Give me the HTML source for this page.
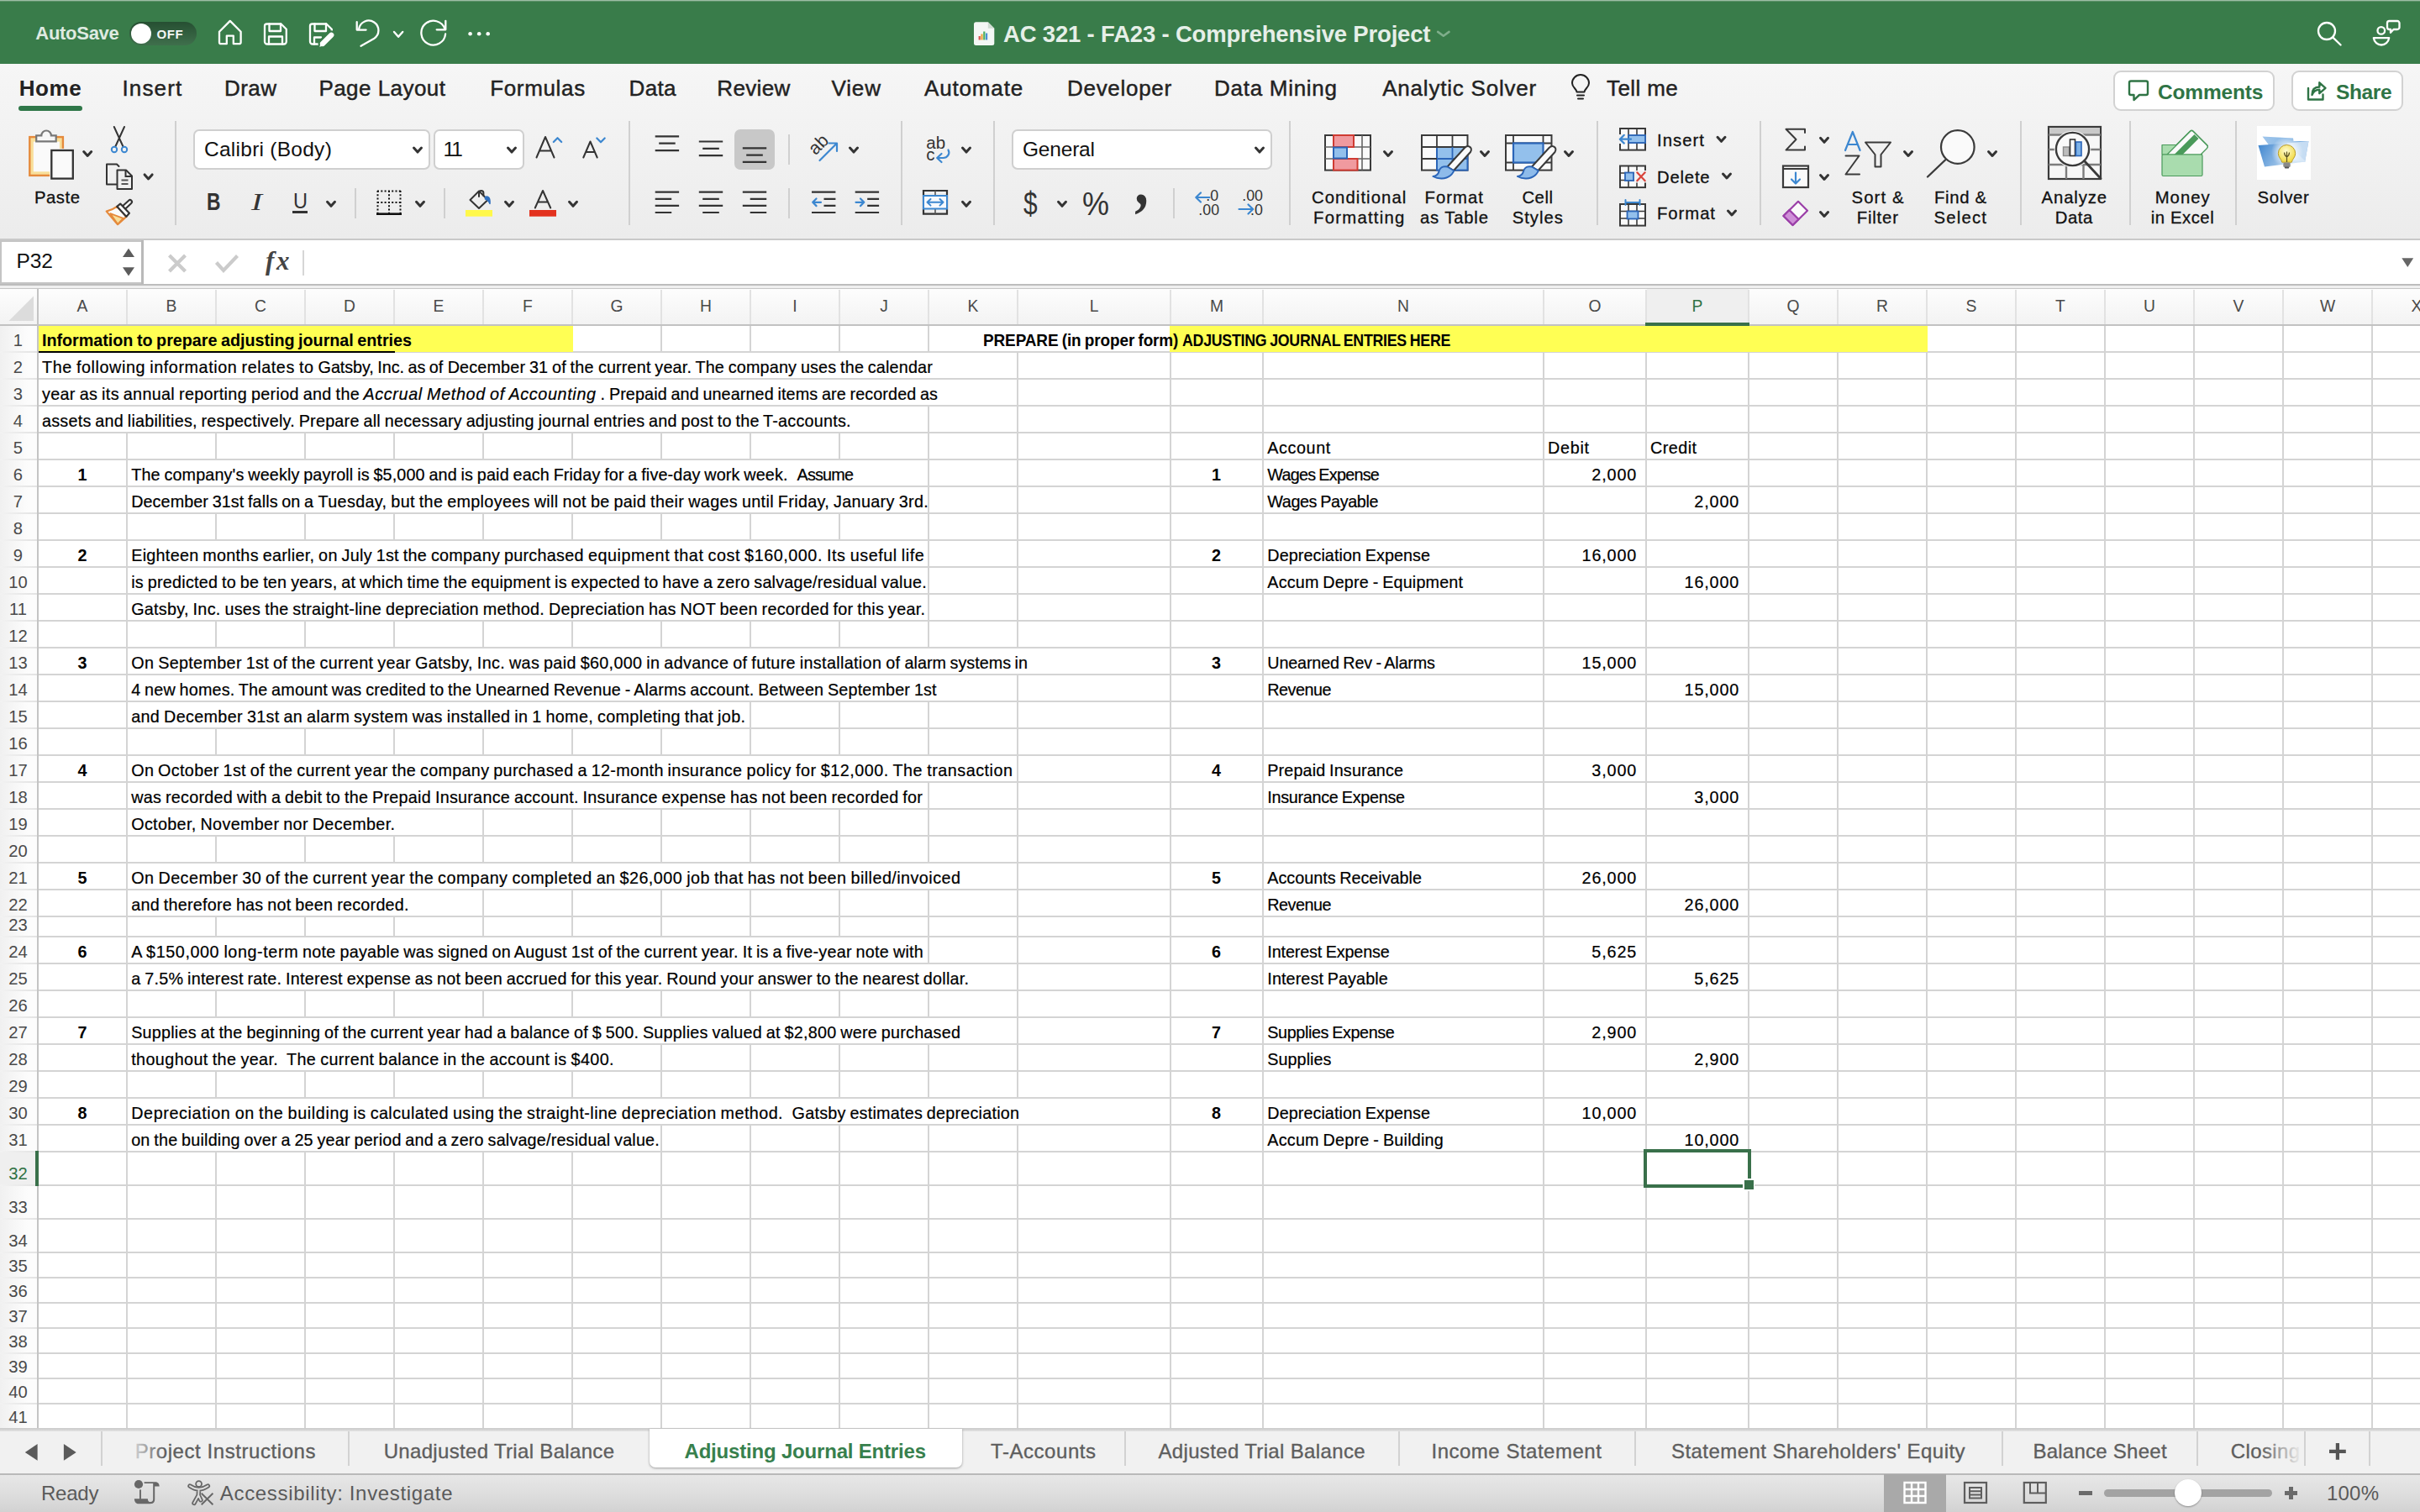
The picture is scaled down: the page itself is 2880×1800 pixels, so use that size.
<!DOCTYPE html>
<html><head><meta charset="utf-8"><title>AC 321 - FA23 - Comprehensive Project</title>
<style>
html,body{margin:0;padding:0;width:2880px;height:1800px;overflow:hidden;}
#app{position:relative;width:2880px;height:1800px;overflow:hidden;background:#fff;}
body{width:2880px;height:1800px;overflow:hidden;background:#fff;font-family:"Liberation Sans", sans-serif;position:relative;}
.t{position:absolute;white-space:pre;}
.r{position:absolute;}
svg{position:absolute;left:0;top:0;overflow:visible;}
</style></head><body><div id="app">
<div class="r" style="left:0px;top:0px;width:2880px;height:76px;background:#397c4a;"></div>
<div class="r" style="left:0px;top:0px;width:2880px;height:1px;background:#9dbea6;"></div>
<div class="r" style="left:0px;top:1px;width:2880px;height:1px;background:#5c9169;"></div>
<div class="t" style="top:25.48px;font-size:22px;line-height:29px;color:#dfeae1;font-weight:700;letter-spacing:-0.283px;left:42.30px;">AutoSave</div>
<div class="t" style="top:23.07px;font-size:27.5px;line-height:36px;color:#e6efe8;font-weight:700;letter-spacing:-0.182px;left:1194.00px;">AC 321 - FA23 - Comprehensive Project</div>
<div class="r" style="left:0px;top:76px;width:2880px;height:208px;background:linear-gradient(#f6f6f6,#f3f3f3 30%,#ececec);"></div>
<div class="r" style="left:0px;top:284px;width:2880px;height:2px;background:#c9c9c9;"></div>
<div class="t" style="top:87.69px;font-size:26px;line-height:34px;color:#222;font-weight:700;letter-spacing:0.550px;left:22.80px;">Home</div>
<div class="t" style="top:87.69px;font-size:26px;line-height:34px;color:#222;letter-spacing:1.134px;-webkit-text-stroke:0.45px #222;left:145.50px;">Insert</div>
<div class="t" style="top:87.69px;font-size:26px;line-height:34px;color:#222;letter-spacing:0.443px;-webkit-text-stroke:0.45px #222;left:267.00px;">Draw</div>
<div class="t" style="top:87.69px;font-size:26px;line-height:34px;color:#222;letter-spacing:0.458px;-webkit-text-stroke:0.45px #222;left:379.40px;">Page Layout</div>
<div class="t" style="top:87.69px;font-size:26px;line-height:34px;color:#222;letter-spacing:0.663px;-webkit-text-stroke:0.45px #222;left:583.20px;">Formulas</div>
<div class="t" style="top:87.69px;font-size:26px;line-height:34px;color:#222;letter-spacing:0.326px;-webkit-text-stroke:0.45px #222;left:748.60px;">Data</div>
<div class="t" style="top:87.69px;font-size:26px;line-height:34px;color:#222;letter-spacing:0.330px;-webkit-text-stroke:0.45px #222;left:853.30px;">Review</div>
<div class="t" style="top:87.69px;font-size:26px;line-height:34px;color:#222;letter-spacing:0.903px;-webkit-text-stroke:0.45px #222;left:989.40px;">View</div>
<div class="t" style="top:87.69px;font-size:26px;line-height:34px;color:#222;letter-spacing:0.843px;-webkit-text-stroke:0.45px #222;left:1100.00px;">Automate</div>
<div class="t" style="top:87.69px;font-size:26px;line-height:34px;color:#222;letter-spacing:0.711px;-webkit-text-stroke:0.45px #222;left:1270.00px;">Developer</div>
<div class="t" style="top:87.69px;font-size:26px;line-height:34px;color:#222;letter-spacing:0.727px;-webkit-text-stroke:0.45px #222;left:1445.00px;">Data Mining</div>
<div class="t" style="top:87.69px;font-size:26px;line-height:34px;color:#222;letter-spacing:0.795px;-webkit-text-stroke:0.45px #222;left:1645.20px;">Analytic Solver</div>
<div class="t" style="top:87.69px;font-size:26px;line-height:34px;color:#222;letter-spacing:0.407px;-webkit-text-stroke:0.45px #222;left:1912.00px;">Tell me</div>
<div class="r" style="left:22px;top:126px;width:76px;height:6px;background:#2f7748;border-radius:3px;"></div>
<div class="r" style="left:2515px;top:84px;width:192px;height:48px;background:#fff;border:2px solid #d2d2d2;border-radius:9px;box-sizing:border-box;"></div>
<div class="r" style="left:2727px;top:84px;width:133px;height:48px;background:#fff;border:2px solid #d2d2d2;border-radius:9px;box-sizing:border-box;"></div>
<div class="t" style="top:93.51px;font-size:24.5px;line-height:32px;color:#2f7445;font-weight:700;letter-spacing:-0.187px;left:2568.00px;">Comments</div>
<div class="t" style="top:93.51px;font-size:24.5px;line-height:32px;color:#2f7445;font-weight:700;letter-spacing:-0.398px;left:2780.00px;">Share</div>
<div class="r" style="left:230px;top:154px;width:282px;height:48px;background:#fff;border:2px solid #cfcfcf;border-radius:7px;box-sizing:border-box;"></div>
<div class="r" style="left:516px;top:154px;width:108px;height:48px;background:#fff;border:2px solid #cfcfcf;border-radius:7px;box-sizing:border-box;"></div>
<div class="r" style="left:1204px;top:154px;width:310px;height:48px;background:#fff;border:2px solid #cfcfcf;border-radius:7px;box-sizing:border-box;"></div>
<div class="r" style="left:874px;top:154px;width:48px;height:48px;background:#c8c8c8;border-radius:7px;"></div>
<div class="t" style="top:162.11px;font-size:24.5px;line-height:32px;color:#111;letter-spacing:0.261px;left:243.00px;">Calibri (Body)</div>
<div class="t" style="top:162.11px;font-size:24.5px;line-height:32px;color:#111;letter-spacing:-1.938px;left:527.50px;">11</div>
<div class="t" style="top:162.11px;font-size:24.5px;line-height:32px;color:#111;letter-spacing:-0.195px;left:1217.00px;">General</div>
<div class="r" style="left:208px;top:144px;width:2px;height:124px;background:#d0d0d0;"></div>
<div class="r" style="left:748px;top:144px;width:2px;height:124px;background:#d0d0d0;"></div>
<div class="r" style="left:1072px;top:144px;width:2px;height:124px;background:#d0d0d0;"></div>
<div class="r" style="left:1182px;top:144px;width:2px;height:124px;background:#d0d0d0;"></div>
<div class="r" style="left:1534px;top:144px;width:2px;height:124px;background:#d0d0d0;"></div>
<div class="r" style="left:1900px;top:144px;width:2px;height:124px;background:#d0d0d0;"></div>
<div class="r" style="left:2094px;top:144px;width:2px;height:124px;background:#d0d0d0;"></div>
<div class="r" style="left:2404px;top:144px;width:2px;height:124px;background:#d0d0d0;"></div>
<div class="r" style="left:2534px;top:144px;width:2px;height:124px;background:#d0d0d0;"></div>
<div class="r" style="left:2660px;top:144px;width:2px;height:124px;background:#d0d0d0;"></div>
<div class="r" style="left:422px;top:224px;width:2px;height:36px;background:#d0d0d0;"></div>
<div class="r" style="left:528px;top:224px;width:2px;height:36px;background:#d0d0d0;"></div>
<div class="r" style="left:938px;top:160px;width:2px;height:36px;background:#d0d0d0;"></div>
<div class="r" style="left:938px;top:224px;width:2px;height:36px;background:#d0d0d0;"></div>
<div class="r" style="left:1396px;top:224px;width:2px;height:36px;background:#d0d0d0;"></div>
<div class="t" style="top:221.67px;font-size:20.3px;line-height:26px;color:#111;letter-spacing:0.531px;-webkit-text-stroke:0.3px #111;left:41.00px;">Paste</div>
<div class="t" style="top:221.67px;font-size:20.3px;line-height:26px;color:#111;letter-spacing:1.082px;-webkit-text-stroke:0.3px #111;left:1561.00px;">Conditional</div>
<div class="t" style="top:245.67px;font-size:20.3px;line-height:26px;color:#111;letter-spacing:1.274px;-webkit-text-stroke:0.3px #111;left:1563.00px;">Formatting</div>
<div class="t" style="top:221.67px;font-size:20.3px;line-height:26px;color:#111;letter-spacing:1.033px;-webkit-text-stroke:0.3px #111;left:1695.60px;">Format</div>
<div class="t" style="top:245.67px;font-size:20.3px;line-height:26px;color:#111;letter-spacing:0.830px;-webkit-text-stroke:0.3px #111;left:1690.00px;">as Table</div>
<div class="t" style="top:221.67px;font-size:20.3px;line-height:26px;color:#111;letter-spacing:0.549px;-webkit-text-stroke:0.3px #111;left:1811.40px;">Cell</div>
<div class="t" style="top:245.67px;font-size:20.3px;line-height:26px;color:#111;letter-spacing:0.953px;-webkit-text-stroke:0.3px #111;left:1799.80px;">Styles</div>
<div class="t" style="top:153.97px;font-size:20.3px;line-height:26px;color:#111;letter-spacing:1.053px;-webkit-text-stroke:0.3px #111;left:1972.00px;">Insert</div>
<div class="t" style="top:197.57px;font-size:20.3px;line-height:26px;color:#111;letter-spacing:0.792px;-webkit-text-stroke:0.3px #111;left:1972.00px;">Delete</div>
<div class="t" style="top:241.47px;font-size:20.3px;line-height:26px;color:#111;letter-spacing:0.953px;-webkit-text-stroke:0.3px #111;left:1972.00px;">Format</div>
<div class="t" style="top:221.67px;font-size:20.3px;line-height:26px;color:#111;letter-spacing:1.128px;-webkit-text-stroke:0.3px #111;left:2203.50px;">Sort &amp;</div>
<div class="t" style="top:245.67px;font-size:20.3px;line-height:26px;color:#111;letter-spacing:0.844px;-webkit-text-stroke:0.3px #111;left:2209.70px;">Filter</div>
<div class="t" style="top:221.67px;font-size:20.3px;line-height:26px;color:#111;letter-spacing:0.675px;-webkit-text-stroke:0.3px #111;left:2302.00px;">Find &amp;</div>
<div class="t" style="top:245.67px;font-size:20.3px;line-height:26px;color:#111;letter-spacing:1.245px;-webkit-text-stroke:0.3px #111;left:2301.40px;">Select</div>
<div class="t" style="top:221.67px;font-size:20.3px;line-height:26px;color:#111;letter-spacing:0.874px;-webkit-text-stroke:0.3px #111;left:2429.60px;">Analyze</div>
<div class="t" style="top:245.67px;font-size:20.3px;line-height:26px;color:#111;letter-spacing:0.585px;-webkit-text-stroke:0.3px #111;left:2445.70px;">Data</div>
<div class="t" style="top:221.67px;font-size:20.3px;line-height:26px;color:#111;letter-spacing:1.031px;-webkit-text-stroke:0.3px #111;left:2564.70px;">Money</div>
<div class="t" style="top:245.67px;font-size:20.3px;line-height:26px;color:#111;letter-spacing:0.555px;-webkit-text-stroke:0.3px #111;left:2559.80px;">in Excel</div>
<div class="t" style="top:221.87px;font-size:20.3px;line-height:26px;color:#111;letter-spacing:0.740px;-webkit-text-stroke:0.3px #111;left:2686.60px;">Solver</div>
<div class="t" style="top:220.00px;font-size:30px;line-height:39px;color:#333;font-weight:700;transform:scaleX(0.761);transform-origin:0 0;left:246.00px;">B</div>
<div class="t" style="top:220.98px;font-size:29.5px;line-height:38px;color:#333;font-style:italic;font-family:'Liberation Serif', serif;transform:scaleX(1.323);transform-origin:0 0;left:298.80px;">I</div>
<div class="t" style="top:223.34px;font-size:25px;line-height:32px;color:#333;transform:scaleX(0.941);transform-origin:0 0;left:348.50px;">U</div>
<div class="r" style="left:348px;top:251.3px;width:18px;height:2.4px;background:#333;"></div>
<div class="t" style="top:216.79px;font-size:39px;line-height:51px;color:#333;transform:scaleX(0.765);transform-origin:0 0;left:1218.40px;">$</div>
<div class="t" style="top:216.81px;font-size:39.5px;line-height:51px;color:#333;transform:scaleX(0.911);transform-origin:0 0;left:1287.60px;">%</div>
<div class="t" style="top:205.77px;font-size:78px;line-height:101px;color:#333;font-weight:700;font-family:'Liberation Serif', serif;transform:scaleX(0.847);transform-origin:0 0;left:1346.50px;">’</div>
<div class="r" style="left:0px;top:286px;width:2880px;height:52px;background:#fff;"></div>
<div class="r" style="left:0px;top:286px;width:170px;height:2px;background:#c4c4c4;"></div>
<div class="r" style="left:0px;top:336px;width:170px;height:2px;background:#c4c4c4;"></div>
<div class="r" style="left:0px;top:286px;width:2px;height:52px;background:#c4c4c4;"></div>
<div class="r" style="left:168px;top:286px;width:3px;height:52px;background:#b9b9b9;"></div>
<div class="r" style="left:360px;top:298px;width:2px;height:30px;background:#d6d6d6;"></div>
<div class="t" style="top:294.91px;font-size:24.5px;line-height:32px;color:#111;letter-spacing:-0.197px;left:19.60px;">P32</div>
<div class="t" style="top:290.76px;font-size:31px;line-height:40px;color:#444;font-weight:700;font-style:italic;font-family:'Liberation Serif', serif;letter-spacing:2.672px;left:316.00px;">fx</div>
<svg width="2880" height="344" viewBox="0 0 2880 344" fill="none"><defs><linearGradient id="tg" x1="0" y1="0" x2="0" y2="1"><stop offset="0" stop-color="#264f32"/><stop offset="1" stop-color="#3f6f4c"/></linearGradient></defs><rect x="154" y="26" width="80" height="28" rx="14" fill="url(#tg)"/><circle cx="168" cy="40" r="12" fill="#fff"/><path d="M261 37.8L273.800 24.900L286.600 37.800V50.200a2 2 0 0 1-2 2H277.800V42.600H269.800V52.200H263a2 2 0 0 1-2-2Z" stroke="#fff" stroke-width="2.3" stroke-linecap="round" stroke-linejoin="round" fill="none"/><path d="M317.5 28.5H334.5L340.8 34.8V49.5a3 3 0 0 1-3 3H318a3 3 0 0 1-3-3V31a2.5 2.5 0 0 1 2.5-2.5Z" stroke="#fff" stroke-width="2.3" stroke-linecap="round" stroke-linejoin="round" fill="none"/><path d="M320.5 28.5V37H334V28.5M320 52.5V43.5H336V52.5" stroke="#fff" stroke-width="2.3" stroke-linecap="round" stroke-linejoin="round" fill="none"/><path d="M381 52.5H372a3 3 0 0 1-3-3V31a2.5 2.5 0 0 1 2.500-2.5H388.500L394.800 34.800V37.500" stroke="#fff" stroke-width="2.3" stroke-linecap="round" stroke-linejoin="round" fill="none"/><path d="M374.5 28.5V37H388V28.5M374 52.5V44.5H382" stroke="#fff" stroke-width="2.3" stroke-linecap="round" stroke-linejoin="round" fill="none"/><path d="M384 52L394.300 41.700" stroke="#397c4a" stroke-width="11" stroke-linecap="round"/><path d="M384 52L394.300 41.700" stroke="#fff" stroke-width="6.200" stroke-linecap="round"/><path d="M380.300 55.800L381.800 50.500L385.800 54.300Z" fill="#fff"/><path d="M424.700 26.200V35.600H435.600" stroke="#fff" stroke-width="2.3" stroke-linecap="round" stroke-linejoin="round" fill="none"/><path d="M427.200 34.200A11.700 11.700 0 1 1 445 46.100L429.500 54.800" stroke="#fff" stroke-width="2.3" stroke-linecap="round" stroke-linejoin="round" fill="none"/><path d="M469.00 38.00L474.10 43.80L479.20 38.00" fill="none" stroke="#fff" stroke-width="2.4" stroke-linecap="round" stroke-linejoin="round"/><path d="M530.300 24.800V35.300H519.700" stroke="#fff" stroke-width="2.3" stroke-linecap="round" stroke-linejoin="round" fill="none"/><path d="M529.400 34.500A14.400 14.400 0 1 0 530.100 40.500" stroke="#fff" stroke-width="2.3" stroke-linecap="round" stroke-linejoin="round" fill="none"/><circle cx="559.6" cy="40.2" r="2.3" fill="#fff"/><circle cx="570.2" cy="40.2" r="2.3" fill="#fff"/><circle cx="580.7" cy="40.2" r="2.3" fill="#fff"/><path d="M1161.5 26.2H1175.800L1183.300 33.800V51.500a2.500 2.500 0 0 1-2.500 2.500H1161.500a2.500 2.500 0 0 1-2.500-2.500V28.700a2.500 2.500 0 0 1 2.500-2.500Z" fill="#f4f7f5"/><path d="M1175.800 26.200V33.800H1183.300Z" fill="#cfdcd2"/><rect x="1164.600" y="43" width="2.200" height="4.500" fill="#d9534f"/><rect x="1167.400" y="40.500" width="2.200" height="7" fill="#f0a33a"/><rect x="1170.200" y="37.500" width="2.200" height="10" fill="#4caf63"/><rect x="1173" y="39.500" width="2.200" height="8" fill="#4a8fd6"/><path d="M1711.10 37.90L1717.80 42.70L1724.50 37.90" fill="none" stroke="#7fae8b" stroke-width="2.6" stroke-linecap="round" stroke-linejoin="round"/><circle cx="2769" cy="37" r="10" stroke="#fff" stroke-width="2.3" stroke-linecap="round" stroke-linejoin="round" fill="none"/><path d="M2776.400 44.600L2785.600 53.500" stroke="#fff" stroke-width="2.3" stroke-linecap="round" stroke-linejoin="round" fill="none"/><circle cx="2833.800" cy="36.400" r="4.300" stroke="#fff" stroke-width="2.3" stroke-linecap="round" stroke-linejoin="round" fill="none"/><path d="M2824.800 45.200H2843.200a9.300 9.700 0 0 1-18.400 0Z" stroke="#fff" stroke-width="2.3" stroke-linecap="round" stroke-linejoin="round" fill="none"/><path d="M2843.500 25H2853a2.500 2.500 0 0 1 2.500 2.500V32.500a2.500 2.500 0 0 1-2.500 2.500H2848.500L2845 38.800V35H2843.500a2.500 2.500 0 0 1-2.500-2.500V27.500a2.500 2.500 0 0 1 2.500-2.500Z" stroke="#fff" stroke-width="2.3" stroke-linecap="round" stroke-linejoin="round" fill="none"/><path d="M1876.500 109.500c0-3.500-5.500-5.500-5.500-10.500a10 10 0 0 1 20 0c0 5-5.500 7-5.500 10.500Z" stroke="#222" stroke-width="2" stroke-linecap="round" stroke-linejoin="round" fill="none"/><path d="M1877 113.500H1885M1878 117.500H1884" stroke="#222" stroke-width="2" stroke-linecap="round" stroke-linejoin="round" fill="none"/><path d="M2536 96.500H2554a2 2 0 0 1 2 2V111a2 2 0 0 1-2 2H2546L2539.500 119V113H2536a2 2 0 0 1-2-2V98.500a2 2 0 0 1 2-2Z" stroke="#2f7445" stroke-width="2.400" stroke-linecap="round" stroke-linejoin="round" fill="none"/><g transform="translate(-3.500 0)"><path d="M2750.500 105V118.500H2768V112.500" stroke="#2f7445" stroke-width="2.400" stroke-linecap="round" stroke-linejoin="round" fill="none"/><path d="M2755 113c0-6.500 3.500-9.500 8.800-9.500V98.300L2771 104.800L2763.800 111.200V106.800c-4 0-6.800 1.500-8.800 6.200Z" stroke="#2f7445" stroke-width="2.400" stroke-linecap="round" stroke-linejoin="round" fill="none"/></g><path d="M153 295.800L160 306H146Z" fill="#5c5c5c"/><path d="M153 328.600L160 318.200H146Z" fill="#5c5c5c"/><path d="M201.500 304L220.500 323M220.500 304L201.500 323" stroke="#cbcbcb" stroke-width="4.200" stroke-linecap="butt" stroke-linejoin="miter" fill="none"/><path d="M257.500 312.500L266 322L282.500 304.500" stroke="#cbcbcb" stroke-width="4.200" stroke-linecap="butt" stroke-linejoin="miter" fill="none"/><path d="M2858.300 307.200H2872.200L2865.300 318Z" fill="#666"/><rect x="35.300" y="163.100" width="39.600" height="45.800" fill="#f8df9a" stroke="#e58a3c" stroke-width="2.400"/><rect x="39.800" y="168.600" width="31.100" height="35.700" fill="#fafafa"/><path d="M43.200 168.400V161.300H49.300a5.800 5.800 0 0 1 11.600 0H66.700V168.400Z" fill="#f6f6f6" stroke="#777" stroke-width="2.200" stroke-linejoin="miter"/><rect x="59.200" y="176.900" width="29.700" height="37.800" fill="#f3f3f3"/><rect x="61.300" y="179" width="25.500" height="33.600" fill="#fafafa" stroke="#333" stroke-width="2.300"/><path d="M99.70 180.50L104.20 185.50L108.70 180.50" fill="none" stroke="#333" stroke-width="3.0" stroke-linecap="round" stroke-linejoin="round"/><path d="M135.800 151L146.500 174.500M148 151L137.300 174.500" stroke="#333" stroke-width="2" stroke-linecap="round" stroke-linejoin="round" fill="none"/><circle cx="136" cy="178" r="3.200" stroke="#3c87d0" stroke-width="2" fill="none"/><circle cx="148" cy="178" r="3.200" stroke="#3c87d0" stroke-width="2" fill="none"/><path d="M138.500 219.500H127V195.500H139L141.500 198" stroke="#333" stroke-width="2" stroke-linecap="round" stroke-linejoin="round" fill="none"/><path d="M139.500 202.500H150L157 209.500V225H139.500Z" stroke="#333" stroke-width="2" stroke-linecap="round" stroke-linejoin="round" fill="none" fill="#fafafa"/><path d="M144.500 214.500H152.500M144.500 219H152.500" stroke="#555" stroke-width="1.800"/><path d="M149.500 203V210H156.500" stroke="#333" stroke-width="2" fill="none"/><path d="M172.10 207.90L176.60 212.90L181.10 207.90" fill="none" stroke="#333" stroke-width="3.0" stroke-linecap="round" stroke-linejoin="round"/><path d="M126.700 251.600Q133.500 250 139.200 245.800L150.400 257.900L140.100 267.200Z" fill="#fbfbfb" stroke="#e58a3c" stroke-width="2.200" stroke-linejoin="round"/><path d="M131.200 254.200L146.600 259.800L140.100 266.800Z" fill="#f8df9a" stroke="#e58a3c" stroke-width="1.800" stroke-linejoin="round"/><path d="M148.600 246L154.700 240.300" stroke="#333" stroke-width="6.600" stroke-linecap="round"/><path d="M148.600 246L154.700 240.300" stroke="#fafafa" stroke-width="2.400" stroke-linecap="round"/><path d="M139.200 245.800L143.200 242.600L153.900 253.800L150.400 257.900Z" fill="#fafafa" stroke="#333" stroke-width="2.200" stroke-linejoin="round"/><path d="M492.50 176.10L497.00 181.10L501.50 176.10" fill="none" stroke="#333" stroke-width="3.0" stroke-linecap="round" stroke-linejoin="round"/><path d="M604.50 176.10L609.00 181.10L613.50 176.10" fill="none" stroke="#333" stroke-width="3.0" stroke-linecap="round" stroke-linejoin="round"/><path d="M1494.50 176.10L1499.00 181.10L1503.50 176.10" fill="none" stroke="#333" stroke-width="3.0" stroke-linecap="round" stroke-linejoin="round"/><path d="M638.500 187.500L649 163L659.500 187.500M642.300 179.500H655.700" stroke="#333" stroke-width="2" stroke-linecap="round" stroke-linejoin="round" fill="none" stroke-width="2.200"/><path d="M658.800 169L663.500 164.200L668.200 169" stroke="#3c87d0" stroke-width="2.200" fill="none" stroke-linecap="round" stroke-linejoin="round"/><path d="M694.300 187.500L702.500 168.500L710.700 187.500M697.300 181H707.700" stroke="#333" stroke-width="2" stroke-linecap="round" stroke-linejoin="round" fill="none" stroke-width="2.200"/><path d="M710.300 164.500L715 169.300L719.700 164.500" stroke="#3c87d0" stroke-width="2.200" fill="none" stroke-linecap="round" stroke-linejoin="round"/><path d="M389.50 240.30L394.00 245.30L398.50 240.30" fill="none" stroke="#333" stroke-width="3.0" stroke-linecap="round" stroke-linejoin="round"/><path d="M449 227.500H477M449 241H477M449.500 227V254M463 227V254M476.500 227V254" stroke="#111" stroke-width="2" stroke-dasharray="2 2.300"/><path d="M448 254.700H478" stroke="#111" stroke-width="2.600"/><path d="M495.50 240.30L500.00 245.30L504.50 240.30" fill="none" stroke="#333" stroke-width="3.0" stroke-linecap="round" stroke-linejoin="round"/><path d="M559.500 238L570 227.500L580.500 238L570 248Z" stroke="#333" stroke-width="2" stroke-linecap="round" stroke-linejoin="round" fill="none" fill="#fafafa"/><path d="M570 234V229.800a2.700 2.700 0 0 1 5.400 0V233" stroke="#333" stroke-width="2" stroke-linecap="round" stroke-linejoin="round" fill="none"/><path d="M577.500 234.500c3.500-1.500 6 1 5.500 8c-1.500-3.500-3-5-5.500-5.500Z" fill="#2f6fbf" stroke="#2f6fbf" stroke-width="1.500" stroke-linejoin="round"/><rect x="554" y="250" width="32" height="7.700" fill="#fff84a"/><path d="M601.50 240.30L606.00 245.30L610.50 240.30" fill="none" stroke="#333" stroke-width="3.0" stroke-linecap="round" stroke-linejoin="round"/><path d="M636.800 247.500L646 227L655.200 247.500M640 240.500H652" stroke="#333" stroke-width="2" stroke-linecap="round" stroke-linejoin="round" fill="none" stroke-width="2.200"/><rect x="630" y="250" width="32" height="7.700" fill="#e3321f"/><path d="M677.50 240.30L682.00 245.30L686.50 240.30" fill="none" stroke="#333" stroke-width="3.0" stroke-linecap="round" stroke-linejoin="round"/><path d="M779.7 162.3H808.1M784.2 170.7H803.7M779.7 179.1H808.1" stroke="#333" stroke-width="2.200"/><path d="M831.8 168.5H860.2M836.2 176.8H855.8M831.8 185.1H860.2" stroke="#333" stroke-width="2.200"/><path d="M883.8 176.4H912.2M888.2 184.6H907.8M883.8 192.8H912.2" stroke="#333" stroke-width="2.200"/><path d="M779.7 228.7H808.1M779.7 236.8H799.2M779.7 244.9H808.1M779.7 253H799.2" stroke="#333" stroke-width="2.200"/><path d="M831.8 228.7H860.2M836.2 236.8H855.8M831.8 244.9H860.2M836.2 253H855.8" stroke="#333" stroke-width="2.200"/><path d="M883.8 228.7H912.2M892.7 236.8H912.2M883.8 244.9H912.2M892.7 253H912.2" stroke="#333" stroke-width="2.200"/><text x="0" y="0" transform="translate(970.500 185.500) rotate(-45)" font-family="Liberation Sans, sans-serif" font-size="21.500" fill="#333">ab</text><path d="M975.500 191L995.500 171M986.500 170.500H996V180" stroke="#3c87d0" stroke-width="2.200" fill="none" stroke-linecap="round" stroke-linejoin="round"/><path d="M1011.50 176.10L1016.00 181.10L1020.50 176.10" fill="none" stroke="#333" stroke-width="3.0" stroke-linecap="round" stroke-linejoin="round"/><path d="M966 228.700H994.400M980.500 236.800H994.400M980.500 244.900H994.400M966 253H994.400" stroke="#333" stroke-width="2.200"/><path d="M977 240.800H967.500M971.500 236.500L967.200 240.800L971.500 245.100" stroke="#3c87d0" stroke-width="2.200" fill="none" stroke-linecap="round" stroke-linejoin="round"/><path d="M1017.700 228.700H1046.100M1032.200 236.800H1046.100M1032.200 244.900H1046.100M1017.700 253H1046.100" stroke="#333" stroke-width="2.200"/><path d="M1018.500 240.800H1028M1024 236.500L1028.300 240.800L1024 245.100" stroke="#3c87d0" stroke-width="2.200" fill="none" stroke-linecap="round" stroke-linejoin="round"/><text x="1102.300" y="177.300" font-family="Liberation Sans, sans-serif" font-size="20.500" fill="#333">ab</text><text x="1102.300" y="191.200" font-family="Liberation Sans, sans-serif" font-size="20.500" fill="#333">c</text><path d="M1128.500 178.500c2.500 4.500-1 9.500-6 9.500H1115.500M1120.500 183L1115.200 188L1120.500 193" stroke="#3c87d0" stroke-width="2.200" fill="none" stroke-linecap="round" stroke-linejoin="round"/><path d="M1145.50 176.10L1150.00 181.10L1154.50 176.10" fill="none" stroke="#333" stroke-width="3.0" stroke-linecap="round" stroke-linejoin="round"/><path d="M1099 227H1127V254.700H1099Z" stroke="#333" stroke-width="2.200" fill="none"/><path d="M1113 227V233M1113 248.500V254.700" stroke="#555" stroke-width="1.600"/><rect x="1099" y="233" width="28" height="15.500" fill="#f6f9fd" stroke="#3c87d0" stroke-width="2"/><path d="M1103.500 240.800H1122.500M1107.500 237L1103.500 240.800L1107.500 244.600M1118.500 237L1122.500 240.800L1118.500 244.600" stroke="#3c87d0" stroke-width="2" fill="none" stroke-linecap="round" stroke-linejoin="round"/><path d="M1145.50 240.30L1150.00 245.30L1154.50 240.30" fill="none" stroke="#333" stroke-width="3.0" stroke-linecap="round" stroke-linejoin="round"/><path d="M1259.50 240.30L1264.00 245.30L1268.50 240.30" fill="none" stroke="#333" stroke-width="3.0" stroke-linecap="round" stroke-linejoin="round"/><text x="1435.300" y="238.600" font-family="Liberation Sans, sans-serif" font-size="17.800" fill="#333">.0</text><text x="1426.300" y="255.500" font-family="Liberation Sans, sans-serif" font-size="17.800" fill="#333">.00</text><path d="M1439.500 235H1423.500M1429 229.500L1423.300 235L1429 240.500" stroke="#3c87d0" stroke-width="2.200" fill="none" stroke-linecap="round" stroke-linejoin="round"/><text x="1478.200" y="238.600" font-family="Liberation Sans, sans-serif" font-size="17.800" fill="#333">.00</text><text x="1488" y="255.500" font-family="Liberation Sans, sans-serif" font-size="17.800" fill="#333">.0</text><path d="M1474.500 249H1491M1485.500 243.500L1491.200 249L1485.500 254.500" stroke="#3c87d0" stroke-width="2.200" fill="none" stroke-linecap="round" stroke-linejoin="round"/><rect x="1577" y="161" width="54" height="41.600" fill="#fafafa" stroke="#3a3a3a" stroke-width="2"/><path d="M1577 175H1631M1577 189H1631M1587 161V202.600M1621 161V202.600" stroke="#666" stroke-width="1.600"/><rect x="1587" y="161" width="24" height="14" fill="#f09a9f" stroke="#cf3b32" stroke-width="2"/><rect x="1587" y="189" width="28.500" height="13.600" fill="#f09a9f" stroke="#cf3b32" stroke-width="2"/><rect x="1587" y="175.500" width="16" height="13" fill="#93c0ec" stroke="#2b65b8" stroke-width="2"/><path d="M1647.50 180.50L1652.00 185.50L1656.50 180.50" fill="none" stroke="#333" stroke-width="3.0" stroke-linecap="round" stroke-linejoin="round"/><rect x="1692" y="161" width="54.500" height="41.600" fill="#fafafa" stroke="#3a3a3a" stroke-width="2"/><rect x="1710" y="175" width="36.500" height="27.600" fill="#93c0ec" stroke="#2b65b8" stroke-width="2"/><path d="M1692 175H1746.500M1692 189H1710M1710 161V175M1728.500 161V175" stroke="#3a3a3a" stroke-width="1.800"/><path d="M1710 189H1746.500M1728.500 175V202.600" stroke="#2b65b8" stroke-width="1.800"/><path d="M1748.5 174.500c2.500 1 3.200 3.500 1.500 6.500L1730 203L1722.5 198.500L1743 176c2-2 4-2.500 5.500-1.500Z" fill="#fafafa" stroke="#3a3a3a" stroke-width="2" stroke-linejoin="round"/><path d="M1722.5 198.500c-5-1-9 1-10 5.500c-1 4-3.500 5.500-7 6c6 3.500 15 3.500 20.500-1c3.500-3 4.500-6 4-6Z" fill="#8ebbea" stroke="#2b65b8" stroke-width="2" stroke-linejoin="round"/><path d="M1762.50 180.50L1767.00 185.50L1771.50 180.50" fill="none" stroke="#333" stroke-width="3.0" stroke-linecap="round" stroke-linejoin="round"/><rect x="1792" y="161" width="54.500" height="41.600" fill="#fafafa" stroke="#3a3a3a" stroke-width="2"/><path d="M1792 170.500H1846.500M1792 193.500H1846.500M1801 161V202.600M1836.500 161V170.500" stroke="#3a3a3a" stroke-width="1.800"/><rect x="1801" y="170.500" width="35.500" height="23" fill="#93c0ec" stroke="#2b65b8" stroke-width="2.200"/><path d="M1849.0 174.500c2.500 1 3.200 3.500 1.500 6.500L1830.5 203L1823.0 198.500L1843.5 176c2-2 4-2.500 5.500-1.500Z" fill="#fafafa" stroke="#3a3a3a" stroke-width="2" stroke-linejoin="round"/><path d="M1823.0 198.500c-5-1-9 1-10 5.500c-1 4-3.500 5.500-7 6c6 3.500 15 3.500 20.500-1c3.500-3 4.500-6 4-6Z" fill="#8ebbea" stroke="#2b65b8" stroke-width="2" stroke-linejoin="round"/><path d="M1862.50 180.50L1867.00 185.50L1871.50 180.50" fill="none" stroke="#333" stroke-width="3.0" stroke-linecap="round" stroke-linejoin="round"/><rect x="1928" y="153" width="30" height="25.600" fill="#fafafa" stroke="#3a3a3a" stroke-width="2"/><path d="M1928 161.5H1958M1928 170H1958M1938 153V178.6M1948 153V178.6" stroke="#3a3a3a" stroke-width="1.600"/><rect x="1938" y="161" width="20" height="9" fill="#93c0ec" stroke="#2b65b8" stroke-width="1.800"/><rect x="1926" y="160" width="11" height="11" fill="#f1f1f1"/><path d="M1941 165.700H1928M1932.800 160.800L1927.800 165.700L1932.800 170.600" stroke="#3c87d0" stroke-width="2.200" fill="none" stroke-linecap="round" stroke-linejoin="round"/><path d="M2044.00 163.30L2048.50 168.30L2053.00 163.30" fill="none" stroke="#333" stroke-width="3.0" stroke-linecap="round" stroke-linejoin="round"/><rect x="1928" y="197.5" width="30" height="25.600" fill="#fafafa" stroke="#3a3a3a" stroke-width="2"/><path d="M1928 206.0H1958M1928 214.5H1958M1938 197.5V223.1M1948 197.5V223.1" stroke="#3a3a3a" stroke-width="1.600"/><rect x="1945" y="203" width="15" height="14.500" fill="#f1f1f1"/><rect x="1934" y="205.500" width="10" height="9.500" fill="#93c0ec" stroke="#2b65b8" stroke-width="1.800"/><path d="M1948.300 205.300L1957.700 215.300M1957.700 205.300L1948.300 215.300" stroke="#d9433a" stroke-width="2.200" stroke-linecap="round"/><path d="M2050.50 207.00L2055.00 212.00L2059.50 207.00" fill="none" stroke="#333" stroke-width="3.0" stroke-linecap="round" stroke-linejoin="round"/><rect x="1928" y="243" width="30" height="25.600" fill="#fafafa" stroke="#3a3a3a" stroke-width="2"/><path d="M1928 251.5H1958M1928 260H1958M1938 243V268.6M1948 243V268.6" stroke="#3a3a3a" stroke-width="1.600"/><rect x="1936.500" y="251.500" width="13" height="9" fill="#93c0ec" stroke="#2b65b8" stroke-width="1.800"/><path d="M1934.500 241H1951.500M1934.500 238V244M1951.500 238V244" stroke="#3c87d0" stroke-width="2" stroke-linecap="round"/><path d="M2056.50 251.00L2061.00 256.00L2065.50 251.00" fill="none" stroke="#333" stroke-width="3.0" stroke-linecap="round" stroke-linejoin="round"/><path d="M2148 158V153.800H2125.500L2137.500 166L2125.500 178.600H2148V174.400" stroke="#3a3a3a" stroke-width="2" stroke-linecap="round" stroke-linejoin="round" fill="none" stroke-width="2.200"/><path d="M2166.50 164.30L2171.00 169.30L2175.50 164.30" fill="none" stroke="#333" stroke-width="3.0" stroke-linecap="round" stroke-linejoin="round"/><rect x="2122" y="197.500" width="30" height="25.500" fill="#fafafa" stroke="#3a3a3a" stroke-width="2.200"/><path d="M2122 201H2152" stroke="#3a3a3a" stroke-width="2"/><path d="M2137 205.500V218M2132 213.500L2137 218.500L2142 213.500" stroke="#3c87d0" stroke-width="2.200" fill="none" stroke-linecap="round" stroke-linejoin="round"/><path d="M2166.50 208.50L2171.00 213.50L2175.50 208.50" fill="none" stroke="#333" stroke-width="3.0" stroke-linecap="round" stroke-linejoin="round"/><path d="M2140 239.800L2151 250.800L2133.500 268L2122.500 257Z" fill="#fafafa" stroke="#9b3fa8" stroke-width="2.200" stroke-linejoin="round"/><path d="M2129.500 250L2140.500 261L2133.500 268L2122.500 257Z" fill="#cf8fd8" stroke="#9b3fa8" stroke-width="2.200" stroke-linejoin="round"/><path d="M2166.50 252.50L2171.00 257.50L2175.50 252.50" fill="none" stroke="#333" stroke-width="3.0" stroke-linecap="round" stroke-linejoin="round"/><path d="M2196 179L2204.800 157L2213.600 179M2199 172H2210.600" stroke="#3c87d0" stroke-width="2.200" fill="none" stroke-linecap="round" stroke-linejoin="round"/><path d="M2196.500 185.500H2212.500L2196.500 207.500H2213" stroke="#3a3a3a" stroke-width="2" stroke-linecap="round" stroke-linejoin="round" fill="none" stroke-width="2.200"/><path d="M2220 169.500H2250L2238.500 184V198.500H2231.500V184Z" stroke="#3a3a3a" stroke-width="2" stroke-linecap="round" stroke-linejoin="round" fill="none" stroke-width="2.200" fill="#fafafa"/><path d="M2266.50 180.50L2271.00 185.50L2275.50 180.50" fill="none" stroke="#333" stroke-width="3.0" stroke-linecap="round" stroke-linejoin="round"/><circle cx="2329.800" cy="175" r="19.800" fill="#fafafa" stroke="#3a3a3a" stroke-width="2.200"/><path d="M2315 190.500L2294 210.500" stroke="#3a3a3a" stroke-width="2.400" stroke-linecap="round"/><path d="M2366.50 180.50L2371.00 185.50L2375.50 180.50" fill="none" stroke="#333" stroke-width="3.0" stroke-linecap="round" stroke-linejoin="round"/><rect x="2438" y="151" width="62" height="62" fill="#f7f7f7" stroke="#3a3a3a" stroke-width="2.200"/><rect x="2439" y="152" width="60" height="7.500" fill="#c9c9c9"/><path d="M2438 160.500H2500M2438 178H2500M2438 196H2500M2459 196V213M2479.500 196V213" stroke="#7d7d7d" stroke-width="2.400"/><circle cx="2466.500" cy="177.500" r="21.800" fill="#f8f8f8"/><circle cx="2466.500" cy="177.500" r="19.600" fill="#fafafa" stroke="#3a3a3a" stroke-width="2.400"/><rect x="2455.500" y="175" width="7" height="10.500" fill="#bdbdbd" stroke="#8a8a8a" stroke-width="1.400"/><rect x="2463.500" y="166" width="6" height="19.500" fill="#fafafa" stroke="#333" stroke-width="1.600"/><rect x="2470.500" y="169" width="6.500" height="16.500" fill="#7db2e8" stroke="#2b65b8" stroke-width="1.600"/><path d="M2480.500 191.500L2500 212.500" stroke="#3a3a3a" stroke-width="2.800" stroke-linecap="round"/><path d="M2573 172.500H2590L2606.500 156a2.500 2.500 0 0 1 3.500 0L2626.500 172.500a2.500 2.500 0 0 1 0 3.500L2620.500 182V184H2573Z" fill="#a9dcae" stroke="#4a9a5a" stroke-width="1.200" stroke-linejoin="round"/><path d="M2579 184L2606.500 156.500a2.500 2.500 0 0 1 3.500 0L2626.500 173a2.500 2.500 0 0 1 0 3.500L2619 184Z" fill="#fafafa" stroke="#4a9a5a" stroke-width="1.200" stroke-linejoin="round"/><path d="M2587.500 184L2611.500 160L2616.500 165L2597.500 184Z" fill="#4a9a5a"/><rect x="2573" y="184" width="48" height="25.500" rx="1.500" fill="#a9dcae" stroke="#4a9a5a" stroke-width="1.200"/><rect x="2686" y="150" width="64" height="64" fill="#fff"/><defs><linearGradient id="sg1" x1="0" y1="0" x2="1" y2="0.300"><stop offset="0" stop-color="#3f86cf"/><stop offset="1" stop-color="#cfe3f5"/></linearGradient><linearGradient id="sg2" x1="0" y1="0" x2="1" y2="0"><stop offset="0" stop-color="#8fbce8"/><stop offset="1" stop-color="#5b9bd9"/></linearGradient><radialGradient id="sg3" cx="0.450" cy="0.350" r="0.600"><stop offset="0" stop-color="#fffbd0"/><stop offset="1" stop-color="#f2dc4a"/></radialGradient></defs><path d="M2692.500 162.500L2729 164.500L2729.500 168L2747.500 168L2743 193L2713 190Z" fill="url(#sg2)" opacity="0.850"/><path d="M2687.500 173L2722 170.500L2744 192.500L2695 198.500Z" fill="url(#sg1)"/><path d="M2722 170.500L2747.500 168L2743 193L2722 190Z" fill="#d9e9f7" opacity="0.800"/><defs><radialGradient id="sg4" cx="0.5" cy="0.5" r="0.5"><stop offset="0" stop-color="#fff" stop-opacity="0.95"/><stop offset="0.55" stop-color="#fff" stop-opacity="0.55"/><stop offset="1" stop-color="#fff" stop-opacity="0"/></radialGradient></defs><circle cx="2722" cy="181" r="19" fill="url(#sg4)"/><path d="M2721.500 172.500a10.200 10.200 0 0 1 10.200 10.200c0 4.500-3.500 6.500-4.500 10.500H2715.800c-1-4-4.500-6-4.500-10.500a10.200 10.200 0 0 1 10.200-10.200Z" fill="url(#sg3)" stroke="#b89b2a" stroke-width="1"/><path d="M2718.500 181.500c0 3 1.500 4.500 3 5.500V193M2724.500 181.500c0 3-1.500 4.500-3 5.500M2721.500 180.500V187" stroke="#5b5222" stroke-width="1.200" fill="none"/><rect x="2717.300" y="193.500" width="8.400" height="5.500" rx="1.500" fill="#8a8a8a"/><rect x="2718.800" y="198.500" width="5.400" height="2" rx="1" fill="#555"/></svg>
<div class="t" style="top:30.70px;font-size:15px;line-height:20px;color:#f2f6f3;font-weight:700;letter-spacing:0.500px;left:186.60px;">OFF</div><div class="r" style="left:0px;top:344px;width:2880px;height:1357px;background:#fff;"></div>
<div class="r" style="left:46px;top:418px;width:2834px;height:2px;background:#d4d4d4;"></div>
<div class="r" style="left:46px;top:450px;width:2834px;height:2px;background:#d4d4d4;"></div>
<div class="r" style="left:46px;top:482px;width:2834px;height:2px;background:#d4d4d4;"></div>
<div class="r" style="left:46px;top:514px;width:2834px;height:2px;background:#d4d4d4;"></div>
<div class="r" style="left:46px;top:546px;width:2834px;height:2px;background:#d4d4d4;"></div>
<div class="r" style="left:46px;top:578px;width:2834px;height:2px;background:#d4d4d4;"></div>
<div class="r" style="left:46px;top:610px;width:2834px;height:2px;background:#d4d4d4;"></div>
<div class="r" style="left:46px;top:642px;width:2834px;height:2px;background:#d4d4d4;"></div>
<div class="r" style="left:46px;top:674px;width:2834px;height:2px;background:#d4d4d4;"></div>
<div class="r" style="left:46px;top:706px;width:2834px;height:2px;background:#d4d4d4;"></div>
<div class="r" style="left:46px;top:738px;width:2834px;height:2px;background:#d4d4d4;"></div>
<div class="r" style="left:46px;top:770px;width:2834px;height:2px;background:#d4d4d4;"></div>
<div class="r" style="left:46px;top:802px;width:2834px;height:2px;background:#d4d4d4;"></div>
<div class="r" style="left:46px;top:834px;width:2834px;height:2px;background:#d4d4d4;"></div>
<div class="r" style="left:46px;top:866px;width:2834px;height:2px;background:#d4d4d4;"></div>
<div class="r" style="left:46px;top:898px;width:2834px;height:2px;background:#d4d4d4;"></div>
<div class="r" style="left:46px;top:930px;width:2834px;height:2px;background:#d4d4d4;"></div>
<div class="r" style="left:46px;top:962px;width:2834px;height:2px;background:#d4d4d4;"></div>
<div class="r" style="left:46px;top:994px;width:2834px;height:2px;background:#d4d4d4;"></div>
<div class="r" style="left:46px;top:1026px;width:2834px;height:2px;background:#d4d4d4;"></div>
<div class="r" style="left:46px;top:1058px;width:2834px;height:2px;background:#d4d4d4;"></div>
<div class="r" style="left:46px;top:1090px;width:2834px;height:2px;background:#d4d4d4;"></div>
<div class="r" style="left:46px;top:1114px;width:2834px;height:2px;background:#d4d4d4;"></div>
<div class="r" style="left:46px;top:1146px;width:2834px;height:2px;background:#d4d4d4;"></div>
<div class="r" style="left:46px;top:1178px;width:2834px;height:2px;background:#d4d4d4;"></div>
<div class="r" style="left:46px;top:1210px;width:2834px;height:2px;background:#d4d4d4;"></div>
<div class="r" style="left:46px;top:1242px;width:2834px;height:2px;background:#d4d4d4;"></div>
<div class="r" style="left:46px;top:1274px;width:2834px;height:2px;background:#d4d4d4;"></div>
<div class="r" style="left:46px;top:1306px;width:2834px;height:2px;background:#d4d4d4;"></div>
<div class="r" style="left:46px;top:1338px;width:2834px;height:2px;background:#d4d4d4;"></div>
<div class="r" style="left:46px;top:1370px;width:2834px;height:2px;background:#d4d4d4;"></div>
<div class="r" style="left:46px;top:1410px;width:2834px;height:2px;background:#d4d4d4;"></div>
<div class="r" style="left:46px;top:1450px;width:2834px;height:2px;background:#d4d4d4;"></div>
<div class="r" style="left:46px;top:1490px;width:2834px;height:2px;background:#d4d4d4;"></div>
<div class="r" style="left:46px;top:1520px;width:2834px;height:2px;background:#d4d4d4;"></div>
<div class="r" style="left:46px;top:1550px;width:2834px;height:2px;background:#d4d4d4;"></div>
<div class="r" style="left:46px;top:1580px;width:2834px;height:2px;background:#d4d4d4;"></div>
<div class="r" style="left:46px;top:1610px;width:2834px;height:2px;background:#d4d4d4;"></div>
<div class="r" style="left:46px;top:1640px;width:2834px;height:2px;background:#d4d4d4;"></div>
<div class="r" style="left:46px;top:1670px;width:2834px;height:2px;background:#d4d4d4;"></div>
<div class="r" style="left:46px;top:1700px;width:2834px;height:2px;background:#d4d4d4;"></div>
<div class="r" style="left:150px;top:388px;width:2px;height:1313px;background:#d4d4d4;"></div>
<div class="r" style="left:256px;top:388px;width:2px;height:1313px;background:#d4d4d4;"></div>
<div class="r" style="left:362px;top:388px;width:2px;height:1313px;background:#d4d4d4;"></div>
<div class="r" style="left:468px;top:388px;width:2px;height:1313px;background:#d4d4d4;"></div>
<div class="r" style="left:574px;top:388px;width:2px;height:1313px;background:#d4d4d4;"></div>
<div class="r" style="left:680px;top:388px;width:2px;height:1313px;background:#d4d4d4;"></div>
<div class="r" style="left:786px;top:388px;width:2px;height:1313px;background:#d4d4d4;"></div>
<div class="r" style="left:892px;top:388px;width:2px;height:1313px;background:#d4d4d4;"></div>
<div class="r" style="left:998px;top:388px;width:2px;height:1313px;background:#d4d4d4;"></div>
<div class="r" style="left:1104px;top:388px;width:2px;height:1313px;background:#d4d4d4;"></div>
<div class="r" style="left:1210px;top:388px;width:2px;height:1313px;background:#d4d4d4;"></div>
<div class="r" style="left:1392px;top:388px;width:2px;height:1313px;background:#d4d4d4;"></div>
<div class="r" style="left:1502px;top:388px;width:2px;height:1313px;background:#d4d4d4;"></div>
<div class="r" style="left:1836px;top:388px;width:2px;height:1313px;background:#d4d4d4;"></div>
<div class="r" style="left:1958px;top:388px;width:2px;height:1313px;background:#d4d4d4;"></div>
<div class="r" style="left:2080px;top:388px;width:2px;height:1313px;background:#d4d4d4;"></div>
<div class="r" style="left:2186px;top:388px;width:2px;height:1313px;background:#d4d4d4;"></div>
<div class="r" style="left:2292px;top:388px;width:2px;height:1313px;background:#d4d4d4;"></div>
<div class="r" style="left:2398px;top:388px;width:2px;height:1313px;background:#d4d4d4;"></div>
<div class="r" style="left:2504px;top:388px;width:2px;height:1313px;background:#d4d4d4;"></div>
<div class="r" style="left:2610px;top:388px;width:2px;height:1313px;background:#d4d4d4;"></div>
<div class="r" style="left:2716px;top:388px;width:2px;height:1313px;background:#d4d4d4;"></div>
<div class="r" style="left:2822px;top:388px;width:2px;height:1313px;background:#d4d4d4;"></div>
<div class="r" style="left:46px;top:420px;width:1164px;height:30px;background:#fff;"></div>
<div class="r" style="left:46px;top:452px;width:1164px;height:30px;background:#fff;"></div>
<div class="r" style="left:46px;top:484px;width:1058px;height:30px;background:#fff;"></div>
<div class="r" style="left:152px;top:548px;width:952px;height:30px;background:#fff;"></div>
<div class="r" style="left:152px;top:580px;width:952px;height:30px;background:#fff;"></div>
<div class="r" style="left:152px;top:644px;width:952px;height:30px;background:#fff;"></div>
<div class="r" style="left:152px;top:676px;width:952px;height:30px;background:#fff;"></div>
<div class="r" style="left:152px;top:708px;width:952px;height:30px;background:#fff;"></div>
<div class="r" style="left:152px;top:772px;width:1240px;height:30px;background:#fff;"></div>
<div class="r" style="left:152px;top:804px;width:1058px;height:30px;background:#fff;"></div>
<div class="r" style="left:152px;top:836px;width:740px;height:30px;background:#fff;"></div>
<div class="r" style="left:152px;top:900px;width:1058px;height:30px;background:#fff;"></div>
<div class="r" style="left:152px;top:932px;width:952px;height:30px;background:#fff;"></div>
<div class="r" style="left:152px;top:964px;width:422px;height:30px;background:#fff;"></div>
<div class="r" style="left:152px;top:1028px;width:1058px;height:30px;background:#fff;"></div>
<div class="r" style="left:152px;top:1060px;width:422px;height:30px;background:#fff;"></div>
<div class="r" style="left:152px;top:1116px;width:952px;height:30px;background:#fff;"></div>
<div class="r" style="left:152px;top:1148px;width:1058px;height:30px;background:#fff;"></div>
<div class="r" style="left:152px;top:1212px;width:1058px;height:30px;background:#fff;"></div>
<div class="r" style="left:152px;top:1244px;width:634px;height:30px;background:#fff;"></div>
<div class="r" style="left:152px;top:1308px;width:1240px;height:30px;background:#fff;"></div>
<div class="r" style="left:152px;top:1340px;width:634px;height:30px;background:#fff;"></div>
<div class="r" style="left:1106px;top:388px;width:286px;height:30px;background:#fff;"></div>
<div class="r" style="left:46px;top:388px;width:636px;height:31px;background:#ffff54;"></div>
<div class="r" style="left:1392px;top:388px;width:902px;height:31px;background:#ffff54;"></div>
<div class="r" style="left:46px;top:418px;width:424px;height:2px;background:#000;"></div>
<div class="t" style="top:391.96px;font-size:19.75px;line-height:26px;color:#000;font-weight:700;letter-spacing:-0.022px;word-spacing:-0.9px;left:50.00px;">Information to prepare adjusting journal entries</div>
<div class="t" style="top:423.96px;font-size:19.75px;line-height:26px;color:#000;letter-spacing:0.583px;word-spacing:-0.9px;-webkit-text-stroke:0.22px #000;left:50.00px;">The following information relates to</div><div class="t" style="top:423.96px;font-size:19.75px;line-height:26px;color:#000;letter-spacing:-0.054px;word-spacing:-0.9px;-webkit-text-stroke:0.22px #000;left:378.60px;">Gatsby, Inc. as of</div><div class="t" style="top:423.96px;font-size:19.75px;line-height:26px;color:#000;letter-spacing:0.173px;word-spacing:-0.9px;-webkit-text-stroke:0.22px #000;left:532.70px;">December 31 of the</div><div class="t" style="top:423.96px;font-size:19.75px;line-height:26px;color:#000;letter-spacing:0.175px;word-spacing:-0.9px;-webkit-text-stroke:0.22px #000;left:711.90px;">current year. The company uses the calendar</div>
<div class="t" style="top:455.96px;font-size:19.75px;line-height:26px;color:#000;letter-spacing:0.333px;word-spacing:-0.9px;-webkit-text-stroke:0.22px #000;left:50.00px;">year as its annual reporting period and the</div>
<div class="t" style="top:455.96px;font-size:19.75px;line-height:26px;color:#000;font-style:italic;letter-spacing:0.654px;word-spacing:-0.9px;-webkit-text-stroke:0.22px #000;left:432.40px;">Accrual Method of Accounting</div>
<div class="t" style="top:455.96px;font-size:19.75px;line-height:26px;color:#000;letter-spacing:0.111px;word-spacing:-0.9px;-webkit-text-stroke:0.22px #000;left:714.60px;">. Prepaid and unearned items are recorded as</div>
<div class="t" style="top:487.96px;font-size:19.75px;line-height:26px;color:#000;letter-spacing:0.234px;word-spacing:-0.9px;-webkit-text-stroke:0.22px #000;left:50.00px;">assets and liabilities, respectively. Prepare all necessary adjusting journal entries and post to the T-accounts.</div>
<div class="t" style="top:551.96px;font-size:19.75px;line-height:26px;color:#000;font-weight:700;left:-902.00px;width:2000px;text-align:center;">1</div>
<div class="t" style="top:551.96px;font-size:19.75px;line-height:26px;color:#000;font-weight:700;left:447.50px;width:2000px;text-align:center;">1</div>
<div class="t" style="top:551.96px;font-size:19.75px;line-height:26px;color:#000;letter-spacing:0.146px;word-spacing:-0.9px;-webkit-text-stroke:0.22px #000;left:156.20px;">The company's weekly payroll is $5,000 and is paid each Friday for a five-day work week.</div><div class="t" style="top:551.96px;font-size:19.75px;line-height:26px;color:#000;letter-spacing:-0.769px;-webkit-text-stroke:0.22px #000;left:948.50px;">Assume</div>
<div class="t" style="top:583.96px;font-size:19.75px;line-height:26px;color:#000;letter-spacing:0.089px;word-spacing:-0.9px;-webkit-text-stroke:0.22px #000;left:156.20px;">December 31st falls on a</div><div class="t" style="top:583.96px;font-size:19.75px;line-height:26px;color:#000;letter-spacing:0.345px;word-spacing:-0.9px;-webkit-text-stroke:0.22px #000;left:378.60px;">Tuesday, but the employees will not be paid their wages until Friday, January 3rd.</div>
<div class="t" style="top:647.96px;font-size:19.75px;line-height:26px;color:#000;font-weight:700;left:-902.00px;width:2000px;text-align:center;">2</div>
<div class="t" style="top:647.96px;font-size:19.75px;line-height:26px;color:#000;font-weight:700;left:447.50px;width:2000px;text-align:center;">2</div>
<div class="t" style="top:647.96px;font-size:19.75px;line-height:26px;color:#000;letter-spacing:0.286px;word-spacing:-0.9px;-webkit-text-stroke:0.22px #000;left:156.20px;">Eighteen months earlier, on July 1st the company purchased</div><div class="t" style="top:647.96px;font-size:19.75px;line-height:26px;color:#000;letter-spacing:0.548px;word-spacing:-0.9px;-webkit-text-stroke:0.22px #000;left:700.00px;">equipment that cost $160,000. Its useful life</div>
<div class="t" style="top:679.96px;font-size:19.75px;line-height:26px;color:#000;letter-spacing:0.245px;word-spacing:-0.9px;-webkit-text-stroke:0.22px #000;left:156.20px;">is predicted to be ten years, at which time the equipment is expected to have a zero salvage/residual value.</div>
<div class="t" style="top:711.96px;font-size:19.75px;line-height:26px;color:#000;letter-spacing:0.280px;word-spacing:-0.9px;-webkit-text-stroke:0.22px #000;left:156.20px;">Gatsby, Inc. uses the straight-line depreciation method. Depreciation has NOT been recorded for this year.</div>
<div class="t" style="top:775.96px;font-size:19.75px;line-height:26px;color:#000;font-weight:700;left:-902.00px;width:2000px;text-align:center;">3</div>
<div class="t" style="top:775.96px;font-size:19.75px;line-height:26px;color:#000;font-weight:700;left:447.50px;width:2000px;text-align:center;">3</div>
<div class="t" style="top:775.96px;font-size:19.75px;line-height:26px;color:#000;letter-spacing:0.339px;word-spacing:-0.9px;-webkit-text-stroke:0.22px #000;left:156.20px;">On September 1st of the current year Gatsby, Inc. was paid $60,000 in advance of future installation of</div><div class="t" style="top:775.96px;font-size:19.75px;line-height:26px;color:#000;letter-spacing:0.009px;word-spacing:-0.9px;-webkit-text-stroke:0.22px #000;left:1076.50px;">alarm systems in</div>
<div class="t" style="top:807.96px;font-size:19.75px;line-height:26px;color:#000;letter-spacing:0.171px;word-spacing:-0.9px;-webkit-text-stroke:0.22px #000;left:156.20px;">4 new homes. The amount was credited to the Unearned Revenue - Alarms account. Between September 1st</div>
<div class="t" style="top:839.96px;font-size:19.75px;line-height:26px;color:#000;letter-spacing:0.343px;word-spacing:-0.9px;-webkit-text-stroke:0.22px #000;left:156.20px;">and December 31st an alarm system was installed in 1 home, completing that job.</div>
<div class="t" style="top:903.96px;font-size:19.75px;line-height:26px;color:#000;font-weight:700;left:-902.00px;width:2000px;text-align:center;">4</div>
<div class="t" style="top:903.96px;font-size:19.75px;line-height:26px;color:#000;font-weight:700;left:447.50px;width:2000px;text-align:center;">4</div>
<div class="t" style="top:903.96px;font-size:19.75px;line-height:26px;color:#000;letter-spacing:0.329px;word-spacing:-0.9px;-webkit-text-stroke:0.22px #000;left:156.20px;">On October 1st of the current year the company purchased a 12-month insurance</div><div class="t" style="top:903.96px;font-size:19.75px;line-height:26px;color:#000;letter-spacing:0.516px;word-spacing:-0.9px;-webkit-text-stroke:0.22px #000;left:888.40px;">policy for $12,000. The transaction</div>
<div class="t" style="top:935.96px;font-size:19.75px;line-height:26px;color:#000;letter-spacing:0.268px;word-spacing:-0.9px;-webkit-text-stroke:0.22px #000;left:156.20px;">was recorded with a debit to the Prepaid Insurance account. Insurance expense has not been recorded for</div>
<div class="t" style="top:967.96px;font-size:19.75px;line-height:26px;color:#000;letter-spacing:0.341px;word-spacing:-0.9px;-webkit-text-stroke:0.22px #000;left:156.20px;">October, November nor December.</div>
<div class="t" style="top:1031.96px;font-size:19.75px;line-height:26px;color:#000;font-weight:700;left:-902.00px;width:2000px;text-align:center;">5</div>
<div class="t" style="top:1031.96px;font-size:19.75px;line-height:26px;color:#000;font-weight:700;left:447.50px;width:2000px;text-align:center;">5</div>
<div class="t" style="top:1031.96px;font-size:19.75px;line-height:26px;color:#000;letter-spacing:0.450px;word-spacing:-0.9px;-webkit-text-stroke:0.22px #000;left:156.20px;">On December 30 of the current year the company completed an $26,000 job that has not been billed/invoiced</div>
<div class="t" style="top:1063.96px;font-size:19.75px;line-height:26px;color:#000;letter-spacing:0.251px;word-spacing:-0.9px;-webkit-text-stroke:0.22px #000;left:156.20px;">and therefore has not been recorded.</div>
<div class="t" style="top:1119.96px;font-size:19.75px;line-height:26px;color:#000;font-weight:700;left:-902.00px;width:2000px;text-align:center;">6</div>
<div class="t" style="top:1119.96px;font-size:19.75px;line-height:26px;color:#000;font-weight:700;left:447.50px;width:2000px;text-align:center;">6</div>
<div class="t" style="top:1119.96px;font-size:19.75px;line-height:26px;color:#000;letter-spacing:0.597px;word-spacing:-0.9px;-webkit-text-stroke:0.22px #000;left:156.20px;">A $150,000 long-term</div><div class="t" style="top:1119.96px;font-size:19.75px;line-height:26px;color:#000;letter-spacing:0.258px;word-spacing:-0.9px;-webkit-text-stroke:0.22px #000;left:360.10px;">note payable was signed on August 1st of the current year. It is a five-year note with</div>
<div class="t" style="top:1151.96px;font-size:19.75px;line-height:26px;color:#000;letter-spacing:0.238px;word-spacing:-0.9px;-webkit-text-stroke:0.22px #000;left:156.20px;">a 7.5% interest rate. Interest expense as not been accrued for this year. Round your answer to the nearest dollar.</div>
<div class="t" style="top:1215.96px;font-size:19.75px;line-height:26px;color:#000;font-weight:700;left:-902.00px;width:2000px;text-align:center;">7</div>
<div class="t" style="top:1215.96px;font-size:19.75px;line-height:26px;color:#000;font-weight:700;left:447.50px;width:2000px;text-align:center;">7</div>
<div class="t" style="top:1215.96px;font-size:19.75px;line-height:26px;color:#000;letter-spacing:0.234px;word-spacing:-0.9px;-webkit-text-stroke:0.22px #000;left:156.20px;">Supplies at the beginning of the current year had a balance of $ 500. Supplies valued at $2,800 were purchased</div>
<div class="t" style="top:1247.96px;font-size:19.75px;line-height:26px;color:#000;letter-spacing:0.409px;word-spacing:-0.9px;-webkit-text-stroke:0.22px #000;left:156.20px;">thoughout the year.  The current balance in the account is $400.</div>
<div class="t" style="top:1311.96px;font-size:19.75px;line-height:26px;color:#000;font-weight:700;left:-902.00px;width:2000px;text-align:center;">8</div>
<div class="t" style="top:1311.96px;font-size:19.75px;line-height:26px;color:#000;font-weight:700;left:447.50px;width:2000px;text-align:center;">8</div>
<div class="t" style="top:1311.96px;font-size:19.75px;line-height:26px;color:#000;letter-spacing:0.616px;word-spacing:-0.9px;-webkit-text-stroke:0.22px #000;left:156.20px;">Depreciation on the building</div><div class="t" style="top:1311.96px;font-size:19.75px;line-height:26px;color:#000;letter-spacing:0.432px;word-spacing:-0.9px;-webkit-text-stroke:0.22px #000;left:420.50px;">is calculated using the straight-line depreciation method.</div><div class="t" style="top:1311.96px;font-size:19.75px;line-height:26px;color:#000;letter-spacing:0.233px;word-spacing:-0.9px;-webkit-text-stroke:0.22px #000;left:942.60px;">Gatsby estimates depreciation</div>
<div class="t" style="top:1343.96px;font-size:19.75px;line-height:26px;color:#000;letter-spacing:0.191px;word-spacing:-0.9px;-webkit-text-stroke:0.22px #000;left:156.20px;">on the building over a 25 year period and a zero salvage/residual value.</div>
<div class="t" style="top:391.96px;font-size:19.75px;line-height:26px;color:#000;font-weight:700;letter-spacing:-0.123px;word-spacing:-0.9px;transform:scaleX(0.960);transform-origin:0 0;left:1170.00px;">PREPARE (in proper form)</div>
<div class="t" style="top:391.96px;font-size:19.75px;line-height:26px;color:#000;font-weight:700;letter-spacing:-0.296px;word-spacing:-0.9px;transform:scaleX(0.900);transform-origin:0 0;left:1406.60px;">ADJUSTING JOURNAL ENTRIES HERE</div>
<div class="t" style="top:519.96px;font-size:19.75px;line-height:26px;color:#000;letter-spacing:0.604px;-webkit-text-stroke:0.22px #000;left:1508.30px;">Account</div>
<div class="t" style="top:519.96px;font-size:19.75px;line-height:26px;color:#000;letter-spacing:0.723px;-webkit-text-stroke:0.22px #000;left:1842.00px;">Debit</div>
<div class="t" style="top:519.96px;font-size:19.75px;line-height:26px;color:#000;letter-spacing:0.463px;-webkit-text-stroke:0.22px #000;left:1964.00px;">Credit</div>
<div class="t" style="top:551.96px;font-size:19.75px;line-height:26px;color:#000;letter-spacing:-0.724px;word-spacing:-0.9px;-webkit-text-stroke:0.22px #000;left:1508.30px;">Wages Expense</div>
<div class="t" style="top:551.96px;font-size:19.75px;line-height:26px;color:#000;letter-spacing:0.891px;-webkit-text-stroke:0.22px #000;right:931.81px;">2,000</div>
<div class="t" style="top:583.96px;font-size:19.75px;line-height:26px;color:#000;letter-spacing:-0.384px;word-spacing:-0.9px;-webkit-text-stroke:0.22px #000;left:1508.30px;">Wages Payable</div>
<div class="t" style="top:583.96px;font-size:19.75px;line-height:26px;color:#000;letter-spacing:0.891px;-webkit-text-stroke:0.22px #000;right:809.81px;">2,000</div>
<div class="t" style="top:647.96px;font-size:19.75px;line-height:26px;color:#000;letter-spacing:0.072px;word-spacing:-0.9px;-webkit-text-stroke:0.22px #000;left:1508.30px;">Depreciation Expense</div>
<div class="t" style="top:647.96px;font-size:19.75px;line-height:26px;color:#000;letter-spacing:0.876px;-webkit-text-stroke:0.22px #000;right:931.82px;">16,000</div>
<div class="t" style="top:679.96px;font-size:19.75px;line-height:26px;color:#000;letter-spacing:0.172px;word-spacing:-0.9px;-webkit-text-stroke:0.22px #000;left:1508.30px;">Accum Depre - Equipment</div>
<div class="t" style="top:679.96px;font-size:19.75px;line-height:26px;color:#000;letter-spacing:0.876px;-webkit-text-stroke:0.22px #000;right:809.82px;">16,000</div>
<div class="t" style="top:775.96px;font-size:19.75px;line-height:26px;color:#000;letter-spacing:-0.144px;word-spacing:-0.9px;-webkit-text-stroke:0.22px #000;left:1508.30px;">Unearned Rev - Alarms</div>
<div class="t" style="top:775.96px;font-size:19.75px;line-height:26px;color:#000;letter-spacing:0.876px;-webkit-text-stroke:0.22px #000;right:931.82px;">15,000</div>
<div class="t" style="top:807.96px;font-size:19.75px;line-height:26px;color:#000;letter-spacing:-0.477px;-webkit-text-stroke:0.22px #000;left:1508.30px;">Revenue</div>
<div class="t" style="top:807.96px;font-size:19.75px;line-height:26px;color:#000;letter-spacing:0.876px;-webkit-text-stroke:0.22px #000;right:809.82px;">15,000</div>
<div class="t" style="top:903.96px;font-size:19.75px;line-height:26px;color:#000;letter-spacing:0.143px;word-spacing:-0.9px;-webkit-text-stroke:0.22px #000;left:1508.30px;">Prepaid Insurance</div>
<div class="t" style="top:903.96px;font-size:19.75px;line-height:26px;color:#000;letter-spacing:0.891px;-webkit-text-stroke:0.22px #000;right:931.81px;">3,000</div>
<div class="t" style="top:935.96px;font-size:19.75px;line-height:26px;color:#000;letter-spacing:-0.280px;word-spacing:-0.9px;-webkit-text-stroke:0.22px #000;left:1508.30px;">Insurance Expense</div>
<div class="t" style="top:935.96px;font-size:19.75px;line-height:26px;color:#000;letter-spacing:0.891px;-webkit-text-stroke:0.22px #000;right:809.81px;">3,000</div>
<div class="t" style="top:1031.96px;font-size:19.75px;line-height:26px;color:#000;letter-spacing:0.009px;word-spacing:-0.9px;-webkit-text-stroke:0.22px #000;left:1508.30px;">Accounts Receivable</div>
<div class="t" style="top:1031.96px;font-size:19.75px;line-height:26px;color:#000;letter-spacing:0.876px;-webkit-text-stroke:0.22px #000;right:931.82px;">26,000</div>
<div class="t" style="top:1063.96px;font-size:19.75px;line-height:26px;color:#000;letter-spacing:-0.477px;-webkit-text-stroke:0.22px #000;left:1508.30px;">Revenue</div>
<div class="t" style="top:1063.96px;font-size:19.75px;line-height:26px;color:#000;letter-spacing:0.876px;-webkit-text-stroke:0.22px #000;right:809.82px;">26,000</div>
<div class="t" style="top:1119.96px;font-size:19.75px;line-height:26px;color:#000;letter-spacing:-0.121px;word-spacing:-0.9px;-webkit-text-stroke:0.22px #000;left:1508.30px;">Interest Expense</div>
<div class="t" style="top:1119.96px;font-size:19.75px;line-height:26px;color:#000;letter-spacing:0.891px;-webkit-text-stroke:0.22px #000;right:931.81px;">5,625</div>
<div class="t" style="top:1151.96px;font-size:19.75px;line-height:26px;color:#000;letter-spacing:0.105px;word-spacing:-0.9px;-webkit-text-stroke:0.22px #000;left:1508.30px;">Interest Payable</div>
<div class="t" style="top:1151.96px;font-size:19.75px;line-height:26px;color:#000;letter-spacing:0.891px;-webkit-text-stroke:0.22px #000;right:809.81px;">5,625</div>
<div class="t" style="top:1215.96px;font-size:19.75px;line-height:26px;color:#000;letter-spacing:-0.381px;word-spacing:-0.9px;-webkit-text-stroke:0.22px #000;left:1508.30px;">Supplies Expense</div>
<div class="t" style="top:1215.96px;font-size:19.75px;line-height:26px;color:#000;letter-spacing:0.891px;-webkit-text-stroke:0.22px #000;right:931.81px;">2,900</div>
<div class="t" style="top:1247.96px;font-size:19.75px;line-height:26px;color:#000;letter-spacing:0.062px;-webkit-text-stroke:0.22px #000;left:1508.30px;">Supplies</div>
<div class="t" style="top:1247.96px;font-size:19.75px;line-height:26px;color:#000;letter-spacing:0.891px;-webkit-text-stroke:0.22px #000;right:809.81px;">2,900</div>
<div class="t" style="top:1311.96px;font-size:19.75px;line-height:26px;color:#000;letter-spacing:0.072px;word-spacing:-0.9px;-webkit-text-stroke:0.22px #000;left:1508.30px;">Depreciation Expense</div>
<div class="t" style="top:1311.96px;font-size:19.75px;line-height:26px;color:#000;letter-spacing:0.876px;-webkit-text-stroke:0.22px #000;right:931.82px;">10,000</div>
<div class="t" style="top:1343.96px;font-size:19.75px;line-height:26px;color:#000;letter-spacing:0.225px;word-spacing:-0.9px;-webkit-text-stroke:0.22px #000;left:1508.30px;">Accum Depre - Building</div>
<div class="t" style="top:1343.96px;font-size:19.75px;line-height:26px;color:#000;letter-spacing:0.876px;-webkit-text-stroke:0.22px #000;right:809.82px;">10,000</div>
<div class="r" style="left:1956px;top:1368px;width:120px;height:38px;border:4px solid #39704a;"></div>
<div class="r" style="left:2074px;top:1403px;width:14px;height:15px;background:#fff;"></div>
<div class="r" style="left:2076px;top:1405px;width:11px;height:11px;background:#39704a;"></div>
<div class="r" style="left:0px;top:338px;width:2880px;height:2px;background:#bdbdbd;"></div>
<div class="r" style="left:0px;top:340px;width:2880px;height:3px;background:#efefef;"></div>
<div class="r" style="left:0px;top:343px;width:2880px;height:1px;background:#c6c6c6;"></div>
<div class="r" style="left:0px;top:344px;width:2880px;height:42px;background:linear-gradient(#fdfdfd,#f3f3f3);"></div>
<div class="r" style="left:1960px;top:344px;width:121px;height:42px;background:#efefef;"></div>
<div class="r" style="left:0px;top:386px;width:2880px;height:2px;background:#c2c2c2;"></div>
<div class="r" style="left:150px;top:345px;width:2px;height:41px;background:#e2e2e2;"></div>
<div class="r" style="left:256px;top:345px;width:2px;height:41px;background:#e2e2e2;"></div>
<div class="r" style="left:362px;top:345px;width:2px;height:41px;background:#e2e2e2;"></div>
<div class="r" style="left:468px;top:345px;width:2px;height:41px;background:#e2e2e2;"></div>
<div class="r" style="left:574px;top:345px;width:2px;height:41px;background:#e2e2e2;"></div>
<div class="r" style="left:680px;top:345px;width:2px;height:41px;background:#e2e2e2;"></div>
<div class="r" style="left:786px;top:345px;width:2px;height:41px;background:#e2e2e2;"></div>
<div class="r" style="left:892px;top:345px;width:2px;height:41px;background:#e2e2e2;"></div>
<div class="r" style="left:998px;top:345px;width:2px;height:41px;background:#e2e2e2;"></div>
<div class="r" style="left:1104px;top:345px;width:2px;height:41px;background:#e2e2e2;"></div>
<div class="r" style="left:1210px;top:345px;width:2px;height:41px;background:#e2e2e2;"></div>
<div class="r" style="left:1392px;top:345px;width:2px;height:41px;background:#e2e2e2;"></div>
<div class="r" style="left:1502px;top:345px;width:2px;height:41px;background:#e2e2e2;"></div>
<div class="r" style="left:1836px;top:345px;width:2px;height:41px;background:#e2e2e2;"></div>
<div class="r" style="left:1958px;top:345px;width:2px;height:41px;background:#e2e2e2;"></div>
<div class="r" style="left:2080px;top:345px;width:2px;height:41px;background:#e2e2e2;"></div>
<div class="r" style="left:2186px;top:345px;width:2px;height:41px;background:#e2e2e2;"></div>
<div class="r" style="left:2292px;top:345px;width:2px;height:41px;background:#e2e2e2;"></div>
<div class="r" style="left:2398px;top:345px;width:2px;height:41px;background:#e2e2e2;"></div>
<div class="r" style="left:2504px;top:345px;width:2px;height:41px;background:#e2e2e2;"></div>
<div class="r" style="left:2610px;top:345px;width:2px;height:41px;background:#e2e2e2;"></div>
<div class="r" style="left:2716px;top:345px;width:2px;height:41px;background:#e2e2e2;"></div>
<div class="r" style="left:2822px;top:345px;width:2px;height:41px;background:#e2e2e2;"></div>
<div class="r" style="left:1958px;top:384px;width:124px;height:4px;background:#39704a;"></div>
<div class="t" style="top:352.41px;font-size:19.3px;line-height:25px;color:#4a4a4a;left:-902.00px;width:2000px;text-align:center;">A</div>
<div class="t" style="top:352.41px;font-size:19.3px;line-height:25px;color:#4a4a4a;left:-796.00px;width:2000px;text-align:center;">B</div>
<div class="t" style="top:352.41px;font-size:19.3px;line-height:25px;color:#4a4a4a;left:-690.00px;width:2000px;text-align:center;">C</div>
<div class="t" style="top:352.41px;font-size:19.3px;line-height:25px;color:#4a4a4a;left:-584.00px;width:2000px;text-align:center;">D</div>
<div class="t" style="top:352.41px;font-size:19.3px;line-height:25px;color:#4a4a4a;left:-478.00px;width:2000px;text-align:center;">E</div>
<div class="t" style="top:352.41px;font-size:19.3px;line-height:25px;color:#4a4a4a;left:-372.00px;width:2000px;text-align:center;">F</div>
<div class="t" style="top:352.41px;font-size:19.3px;line-height:25px;color:#4a4a4a;left:-266.00px;width:2000px;text-align:center;">G</div>
<div class="t" style="top:352.41px;font-size:19.3px;line-height:25px;color:#4a4a4a;left:-160.00px;width:2000px;text-align:center;">H</div>
<div class="t" style="top:352.41px;font-size:19.3px;line-height:25px;color:#4a4a4a;left:-54.00px;width:2000px;text-align:center;">I</div>
<div class="t" style="top:352.41px;font-size:19.3px;line-height:25px;color:#4a4a4a;left:52.00px;width:2000px;text-align:center;">J</div>
<div class="t" style="top:352.41px;font-size:19.3px;line-height:25px;color:#4a4a4a;left:158.00px;width:2000px;text-align:center;">K</div>
<div class="t" style="top:352.41px;font-size:19.3px;line-height:25px;color:#4a4a4a;left:302.00px;width:2000px;text-align:center;">L</div>
<div class="t" style="top:352.41px;font-size:19.3px;line-height:25px;color:#4a4a4a;left:448.00px;width:2000px;text-align:center;">M</div>
<div class="t" style="top:352.41px;font-size:19.3px;line-height:25px;color:#4a4a4a;left:670.00px;width:2000px;text-align:center;">N</div>
<div class="t" style="top:352.41px;font-size:19.3px;line-height:25px;color:#4a4a4a;left:898.00px;width:2000px;text-align:center;">O</div>
<div class="t" style="top:352.41px;font-size:19.3px;line-height:25px;color:#2f7144;left:1020.00px;width:2000px;text-align:center;">P</div>
<div class="t" style="top:352.41px;font-size:19.3px;line-height:25px;color:#4a4a4a;left:1134.00px;width:2000px;text-align:center;">Q</div>
<div class="t" style="top:352.41px;font-size:19.3px;line-height:25px;color:#4a4a4a;left:1240.00px;width:2000px;text-align:center;">R</div>
<div class="t" style="top:352.41px;font-size:19.3px;line-height:25px;color:#4a4a4a;left:1346.00px;width:2000px;text-align:center;">S</div>
<div class="t" style="top:352.41px;font-size:19.3px;line-height:25px;color:#4a4a4a;left:1452.00px;width:2000px;text-align:center;">T</div>
<div class="t" style="top:352.41px;font-size:19.3px;line-height:25px;color:#4a4a4a;left:1558.00px;width:2000px;text-align:center;">U</div>
<div class="t" style="top:352.41px;font-size:19.3px;line-height:25px;color:#4a4a4a;left:1664.00px;width:2000px;text-align:center;">V</div>
<div class="t" style="top:352.41px;font-size:19.3px;line-height:25px;color:#4a4a4a;left:1770.00px;width:2000px;text-align:center;">W</div>
<div class="t" style="top:352.41px;font-size:19.3px;line-height:25px;color:#4a4a4a;left:1876.00px;width:2000px;text-align:center;">X</div>
<svg width="46" height="388" viewBox="0 0 46 388"><path d="M40 352.5V382H10.5Z" fill="#dcdcdc"/></svg>
<div class="r" style="left:0px;top:388px;width:44px;height:1313px;background:linear-gradient(90deg,#f0f0f0,#fcfcfc 75%);"></div>
<div class="r" style="left:44px;top:344px;width:2px;height:1357px;background:#c4c4c4;"></div>
<div class="r" style="left:0px;top:418px;width:44px;height:2px;background:linear-gradient(90deg,#f2f2f2,#e3e3e3);"></div>
<div class="t" style="top:391.80px;font-size:20.2px;line-height:26px;color:#4a4a4a;left:-978.60px;width:2000px;text-align:center;">1</div>
<div class="r" style="left:0px;top:450px;width:44px;height:2px;background:linear-gradient(90deg,#f2f2f2,#e3e3e3);"></div>
<div class="t" style="top:423.80px;font-size:20.2px;line-height:26px;color:#4a4a4a;left:-978.60px;width:2000px;text-align:center;">2</div>
<div class="r" style="left:0px;top:482px;width:44px;height:2px;background:linear-gradient(90deg,#f2f2f2,#e3e3e3);"></div>
<div class="t" style="top:455.80px;font-size:20.2px;line-height:26px;color:#4a4a4a;left:-978.60px;width:2000px;text-align:center;">3</div>
<div class="r" style="left:0px;top:514px;width:44px;height:2px;background:linear-gradient(90deg,#f2f2f2,#e3e3e3);"></div>
<div class="t" style="top:487.80px;font-size:20.2px;line-height:26px;color:#4a4a4a;left:-978.60px;width:2000px;text-align:center;">4</div>
<div class="r" style="left:0px;top:546px;width:44px;height:2px;background:linear-gradient(90deg,#f2f2f2,#e3e3e3);"></div>
<div class="t" style="top:519.80px;font-size:20.2px;line-height:26px;color:#4a4a4a;left:-978.60px;width:2000px;text-align:center;">5</div>
<div class="r" style="left:0px;top:578px;width:44px;height:2px;background:linear-gradient(90deg,#f2f2f2,#e3e3e3);"></div>
<div class="t" style="top:551.80px;font-size:20.2px;line-height:26px;color:#4a4a4a;left:-978.60px;width:2000px;text-align:center;">6</div>
<div class="r" style="left:0px;top:610px;width:44px;height:2px;background:linear-gradient(90deg,#f2f2f2,#e3e3e3);"></div>
<div class="t" style="top:583.80px;font-size:20.2px;line-height:26px;color:#4a4a4a;left:-978.60px;width:2000px;text-align:center;">7</div>
<div class="r" style="left:0px;top:642px;width:44px;height:2px;background:linear-gradient(90deg,#f2f2f2,#e3e3e3);"></div>
<div class="t" style="top:615.80px;font-size:20.2px;line-height:26px;color:#4a4a4a;left:-978.60px;width:2000px;text-align:center;">8</div>
<div class="r" style="left:0px;top:674px;width:44px;height:2px;background:linear-gradient(90deg,#f2f2f2,#e3e3e3);"></div>
<div class="t" style="top:647.80px;font-size:20.2px;line-height:26px;color:#4a4a4a;left:-978.60px;width:2000px;text-align:center;">9</div>
<div class="r" style="left:0px;top:706px;width:44px;height:2px;background:linear-gradient(90deg,#f2f2f2,#e3e3e3);"></div>
<div class="t" style="top:679.80px;font-size:20.2px;line-height:26px;color:#4a4a4a;left:-978.60px;width:2000px;text-align:center;">10</div>
<div class="r" style="left:0px;top:738px;width:44px;height:2px;background:linear-gradient(90deg,#f2f2f2,#e3e3e3);"></div>
<div class="t" style="top:711.80px;font-size:20.2px;line-height:26px;color:#4a4a4a;left:-978.60px;width:2000px;text-align:center;">11</div>
<div class="r" style="left:0px;top:770px;width:44px;height:2px;background:linear-gradient(90deg,#f2f2f2,#e3e3e3);"></div>
<div class="t" style="top:743.80px;font-size:20.2px;line-height:26px;color:#4a4a4a;left:-978.60px;width:2000px;text-align:center;">12</div>
<div class="r" style="left:0px;top:802px;width:44px;height:2px;background:linear-gradient(90deg,#f2f2f2,#e3e3e3);"></div>
<div class="t" style="top:775.80px;font-size:20.2px;line-height:26px;color:#4a4a4a;left:-978.60px;width:2000px;text-align:center;">13</div>
<div class="r" style="left:0px;top:834px;width:44px;height:2px;background:linear-gradient(90deg,#f2f2f2,#e3e3e3);"></div>
<div class="t" style="top:807.80px;font-size:20.2px;line-height:26px;color:#4a4a4a;left:-978.60px;width:2000px;text-align:center;">14</div>
<div class="r" style="left:0px;top:866px;width:44px;height:2px;background:linear-gradient(90deg,#f2f2f2,#e3e3e3);"></div>
<div class="t" style="top:839.80px;font-size:20.2px;line-height:26px;color:#4a4a4a;left:-978.60px;width:2000px;text-align:center;">15</div>
<div class="r" style="left:0px;top:898px;width:44px;height:2px;background:linear-gradient(90deg,#f2f2f2,#e3e3e3);"></div>
<div class="t" style="top:871.80px;font-size:20.2px;line-height:26px;color:#4a4a4a;left:-978.60px;width:2000px;text-align:center;">16</div>
<div class="r" style="left:0px;top:930px;width:44px;height:2px;background:linear-gradient(90deg,#f2f2f2,#e3e3e3);"></div>
<div class="t" style="top:903.80px;font-size:20.2px;line-height:26px;color:#4a4a4a;left:-978.60px;width:2000px;text-align:center;">17</div>
<div class="r" style="left:0px;top:962px;width:44px;height:2px;background:linear-gradient(90deg,#f2f2f2,#e3e3e3);"></div>
<div class="t" style="top:935.80px;font-size:20.2px;line-height:26px;color:#4a4a4a;left:-978.60px;width:2000px;text-align:center;">18</div>
<div class="r" style="left:0px;top:994px;width:44px;height:2px;background:linear-gradient(90deg,#f2f2f2,#e3e3e3);"></div>
<div class="t" style="top:967.80px;font-size:20.2px;line-height:26px;color:#4a4a4a;left:-978.60px;width:2000px;text-align:center;">19</div>
<div class="r" style="left:0px;top:1026px;width:44px;height:2px;background:linear-gradient(90deg,#f2f2f2,#e3e3e3);"></div>
<div class="t" style="top:999.80px;font-size:20.2px;line-height:26px;color:#4a4a4a;left:-978.60px;width:2000px;text-align:center;">20</div>
<div class="r" style="left:0px;top:1058px;width:44px;height:2px;background:linear-gradient(90deg,#f2f2f2,#e3e3e3);"></div>
<div class="t" style="top:1031.80px;font-size:20.2px;line-height:26px;color:#4a4a4a;left:-978.60px;width:2000px;text-align:center;">21</div>
<div class="r" style="left:0px;top:1090px;width:44px;height:2px;background:linear-gradient(90deg,#f2f2f2,#e3e3e3);"></div>
<div class="t" style="top:1063.80px;font-size:20.2px;line-height:26px;color:#4a4a4a;left:-978.60px;width:2000px;text-align:center;">22</div>
<div class="r" style="left:0px;top:1114px;width:44px;height:2px;background:linear-gradient(90deg,#f2f2f2,#e3e3e3);"></div>
<div class="t" style="top:1087.80px;font-size:20.2px;line-height:26px;color:#4a4a4a;left:-978.60px;width:2000px;text-align:center;">23</div>
<div class="r" style="left:0px;top:1146px;width:44px;height:2px;background:linear-gradient(90deg,#f2f2f2,#e3e3e3);"></div>
<div class="t" style="top:1119.80px;font-size:20.2px;line-height:26px;color:#4a4a4a;left:-978.60px;width:2000px;text-align:center;">24</div>
<div class="r" style="left:0px;top:1178px;width:44px;height:2px;background:linear-gradient(90deg,#f2f2f2,#e3e3e3);"></div>
<div class="t" style="top:1151.80px;font-size:20.2px;line-height:26px;color:#4a4a4a;left:-978.60px;width:2000px;text-align:center;">25</div>
<div class="r" style="left:0px;top:1210px;width:44px;height:2px;background:linear-gradient(90deg,#f2f2f2,#e3e3e3);"></div>
<div class="t" style="top:1183.80px;font-size:20.2px;line-height:26px;color:#4a4a4a;left:-978.60px;width:2000px;text-align:center;">26</div>
<div class="r" style="left:0px;top:1242px;width:44px;height:2px;background:linear-gradient(90deg,#f2f2f2,#e3e3e3);"></div>
<div class="t" style="top:1215.80px;font-size:20.2px;line-height:26px;color:#4a4a4a;left:-978.60px;width:2000px;text-align:center;">27</div>
<div class="r" style="left:0px;top:1274px;width:44px;height:2px;background:linear-gradient(90deg,#f2f2f2,#e3e3e3);"></div>
<div class="t" style="top:1247.80px;font-size:20.2px;line-height:26px;color:#4a4a4a;left:-978.60px;width:2000px;text-align:center;">28</div>
<div class="r" style="left:0px;top:1306px;width:44px;height:2px;background:linear-gradient(90deg,#f2f2f2,#e3e3e3);"></div>
<div class="t" style="top:1279.80px;font-size:20.2px;line-height:26px;color:#4a4a4a;left:-978.60px;width:2000px;text-align:center;">29</div>
<div class="r" style="left:0px;top:1338px;width:44px;height:2px;background:linear-gradient(90deg,#f2f2f2,#e3e3e3);"></div>
<div class="t" style="top:1311.80px;font-size:20.2px;line-height:26px;color:#4a4a4a;left:-978.60px;width:2000px;text-align:center;">30</div>
<div class="r" style="left:0px;top:1370px;width:44px;height:2px;background:linear-gradient(90deg,#f2f2f2,#e3e3e3);"></div>
<div class="t" style="top:1343.80px;font-size:20.2px;line-height:26px;color:#4a4a4a;left:-978.60px;width:2000px;text-align:center;">31</div>
<div class="r" style="left:0px;top:1410px;width:44px;height:2px;background:linear-gradient(90deg,#f2f2f2,#e3e3e3);"></div>
<div class="r" style="left:0px;top:1372px;width:44px;height:38px;background:#efefef;"></div>
<div class="r" style="left:42px;top:1370px;width:4px;height:42px;background:#39704a;"></div>
<div class="t" style="top:1383.80px;font-size:20.2px;line-height:26px;color:#2f7144;left:-978.60px;width:2000px;text-align:center;">32</div>
<div class="r" style="left:0px;top:1450px;width:44px;height:2px;background:linear-gradient(90deg,#f2f2f2,#e3e3e3);"></div>
<div class="t" style="top:1423.80px;font-size:20.2px;line-height:26px;color:#4a4a4a;left:-978.60px;width:2000px;text-align:center;">33</div>
<div class="r" style="left:0px;top:1490px;width:44px;height:2px;background:linear-gradient(90deg,#f2f2f2,#e3e3e3);"></div>
<div class="t" style="top:1463.80px;font-size:20.2px;line-height:26px;color:#4a4a4a;left:-978.60px;width:2000px;text-align:center;">34</div>
<div class="r" style="left:0px;top:1520px;width:44px;height:2px;background:linear-gradient(90deg,#f2f2f2,#e3e3e3);"></div>
<div class="t" style="top:1493.80px;font-size:20.2px;line-height:26px;color:#4a4a4a;left:-978.60px;width:2000px;text-align:center;">35</div>
<div class="r" style="left:0px;top:1550px;width:44px;height:2px;background:linear-gradient(90deg,#f2f2f2,#e3e3e3);"></div>
<div class="t" style="top:1523.80px;font-size:20.2px;line-height:26px;color:#4a4a4a;left:-978.60px;width:2000px;text-align:center;">36</div>
<div class="r" style="left:0px;top:1580px;width:44px;height:2px;background:linear-gradient(90deg,#f2f2f2,#e3e3e3);"></div>
<div class="t" style="top:1553.80px;font-size:20.2px;line-height:26px;color:#4a4a4a;left:-978.60px;width:2000px;text-align:center;">37</div>
<div class="r" style="left:0px;top:1610px;width:44px;height:2px;background:linear-gradient(90deg,#f2f2f2,#e3e3e3);"></div>
<div class="t" style="top:1583.80px;font-size:20.2px;line-height:26px;color:#4a4a4a;left:-978.60px;width:2000px;text-align:center;">38</div>
<div class="r" style="left:0px;top:1640px;width:44px;height:2px;background:linear-gradient(90deg,#f2f2f2,#e3e3e3);"></div>
<div class="t" style="top:1613.80px;font-size:20.2px;line-height:26px;color:#4a4a4a;left:-978.60px;width:2000px;text-align:center;">39</div>
<div class="r" style="left:0px;top:1670px;width:44px;height:2px;background:linear-gradient(90deg,#f2f2f2,#e3e3e3);"></div>
<div class="t" style="top:1643.80px;font-size:20.2px;line-height:26px;color:#4a4a4a;left:-978.60px;width:2000px;text-align:center;">40</div>
<div class="r" style="left:0px;top:1700px;width:44px;height:2px;background:linear-gradient(90deg,#f2f2f2,#e3e3e3);"></div>
<div class="t" style="top:1673.80px;font-size:20.2px;line-height:26px;color:#4a4a4a;left:-978.60px;width:2000px;text-align:center;">41</div><div class="r" style="left:0px;top:1701px;width:2880px;height:54px;background:#f1f1f1;"></div>
<div class="r" style="left:0px;top:1700px;width:2880px;height:4px;background:linear-gradient(#cbcbcb,#d3d3d3 50%,#e6e6e6);"></div>
<div class="r" style="left:0px;top:1754px;width:2880px;height:2px;background:#b9b9b9;"></div>
<div class="r" style="left:773px;top:1701px;width:372px;height:46px;background:#fff;border-radius:0 0 7px 7px;box-shadow:0 1px 3px rgba(0,0,0,.35);"></div>
<div class="t" style="top:1712.08px;font-size:24px;line-height:31px;color:#5e5e5e;letter-spacing:0.563px;-webkit-text-stroke:0.35px #5e5e5e;left:160.70px;">Project Instructions</div>
<div class="t" style="top:1712.08px;font-size:24px;line-height:31px;color:#5e5e5e;letter-spacing:0.325px;-webkit-text-stroke:0.35px #5e5e5e;left:456.70px;">Unadjusted Trial Balance</div>
<div class="t" style="top:1712.08px;font-size:24px;line-height:31px;color:#5e5e5e;letter-spacing:0.550px;-webkit-text-stroke:0.35px #5e5e5e;left:1179.00px;">T-Accounts</div>
<div class="t" style="top:1712.08px;font-size:24px;line-height:31px;color:#5e5e5e;letter-spacing:0.352px;-webkit-text-stroke:0.35px #5e5e5e;left:1378.40px;">Adjusted Trial Balance</div>
<div class="t" style="top:1712.08px;font-size:24px;line-height:31px;color:#5e5e5e;letter-spacing:0.502px;-webkit-text-stroke:0.35px #5e5e5e;left:1703.50px;">Income Statement</div>
<div class="t" style="top:1712.08px;font-size:24px;line-height:31px;color:#5e5e5e;letter-spacing:0.439px;-webkit-text-stroke:0.35px #5e5e5e;left:1989.00px;">Statement Shareholders' Equity</div>
<div class="t" style="top:1712.08px;font-size:24px;line-height:31px;color:#5e5e5e;letter-spacing:0.256px;-webkit-text-stroke:0.35px #5e5e5e;left:2419.40px;">Balance Sheet</div>
<div class="t" style="top:1712.08px;font-size:24px;line-height:31px;color:#5e5e5e;letter-spacing:0.359px;-webkit-text-stroke:0.35px #5e5e5e;left:2654.80px;">Closing</div>
<div class="t" style="top:1712.08px;font-size:24px;line-height:31px;color:#37804d;font-weight:700;letter-spacing:-0.189px;left:814.50px;">Adjusting Journal Entries</div>
<div class="r" style="left:150px;top:1708px;width:46px;height:40px;background:linear-gradient(90deg,#f1f1f1,rgba(241,241,241,0));"></div>
<div class="r" style="left:2690px;top:1708px;width:50px;height:40px;background:linear-gradient(90deg,rgba(241,241,241,0),#f1f1f1);"></div>
<div class="r" style="left:120px;top:1704px;width:2px;height:41px;background:#d2d2d2;"></div>
<div class="r" style="left:414px;top:1704px;width:2px;height:41px;background:#d2d2d2;"></div>
<div class="r" style="left:1338px;top:1704px;width:2px;height:41px;background:#d2d2d2;"></div>
<div class="r" style="left:1664px;top:1704px;width:2px;height:41px;background:#d2d2d2;"></div>
<div class="r" style="left:1945px;top:1704px;width:2px;height:41px;background:#d2d2d2;"></div>
<div class="r" style="left:2382px;top:1704px;width:2px;height:41px;background:#d2d2d2;"></div>
<div class="r" style="left:2614px;top:1704px;width:2px;height:41px;background:#d2d2d2;"></div>
<div class="r" style="left:2742px;top:1704px;width:2px;height:41px;background:#d2d2d2;"></div>
<div class="r" style="left:2819px;top:1704px;width:2px;height:41px;background:#d2d2d2;"></div>
<div class="r" style="left:0px;top:1756px;width:2880px;height:44px;background:linear-gradient(#e7e7e7,#dedede 50%,#d2d2d2);"></div>
<div class="r" style="left:2242px;top:1755px;width:74px;height:45px;background:#a9a9a9;"></div>
<div class="t" style="top:1762.18px;font-size:24px;line-height:31px;color:#5a5a5a;letter-spacing:-0.219px;left:49.00px;">Ready</div>
<div class="t" style="top:1762.18px;font-size:24px;line-height:31px;color:#5a5a5a;letter-spacing:0.664px;left:261.80px;">Accessibility: Investigate</div>
<div class="t" style="top:1762.18px;font-size:24px;line-height:31px;color:#5a5a5a;letter-spacing:0.203px;left:2769.00px;">100%</div>
<div class="r" style="left:2504px;top:1773px;width:200px;height:9px;background:#a3a3a3;border-radius:4.500px;"></div>
<div class="r" style="left:2587.5px;top:1761px;width:32px;height:32px;background:#fff;border-radius:16px;box-shadow:0 1px 2px rgba(0,0,0,.35);"></div>
<div class="r" style="left:2474px;top:1775px;width:16px;height:4.5px;background:#6a6a6a;"></div>
<div class="r" style="left:2718.5px;top:1775px;width:15.5px;height:4.5px;background:#6a6a6a;"></div>
<div class="r" style="left:2724px;top:1769.5px;width:4.5px;height:15.5px;background:#6a6a6a;"></div>
<svg width="2880" height="1800" viewBox="0 0 2880 1800" fill="none"><path d="M44.600 1719V1738.800L29.800 1728.900Z" fill="#5a5a5a"/><path d="M75.900 1719V1738.800L90.700 1728.900Z" fill="#5a5a5a"/><path d="M2772 1727.800H2791.800M2781.900 1717.900V1737.700" stroke="#555" stroke-width="4.200"/><circle cx="165" cy="1767" r="5.100" fill="#676767"/><rect x="166" y="1773.400" width="1.900" height="11.500" fill="#676767"/><path d="M171.600 1764.200H185C188 1764.200 189.700 1766.500 189.700 1769.600H184.200V1785C184.200 1788.500 182 1790.200 179 1790.200H165C161.500 1790.200 159.900 1787.500 159.900 1784.200H175.800C175.800 1787 177.400 1788.100 179 1788.100C181.300 1788.100 182.200 1786.600 182.200 1784.500V1766.100H171.600Z" fill="#676767"/><path d="M226 1769Q231.300 1772.700 236.600 1772.700Q242 1772.700 247.400 1769M236.600 1772.700L236.200 1780L231 1789.400M236.200 1780L239 1785.800" stroke="#676767" stroke-width="5.400" stroke-linecap="round" stroke-linejoin="round" fill="none"/><path d="M226 1769Q231.300 1772.700 236.600 1772.700Q242 1772.700 247.400 1769M236.600 1772.700L236.200 1780L231 1789.400M236.200 1780L239 1785.800" stroke="#dedede" stroke-width="1.900" stroke-linecap="round" stroke-linejoin="round" fill="none"/><circle cx="236.600" cy="1766.500" r="3.450" stroke="#676767" stroke-width="1.800" fill="#e0e0e0"/><path d="M239.700 1777.800L253.400 1791.200M253.400 1777.800L239.700 1791.200" stroke="#676767" stroke-width="2" stroke-linecap="butt"/><path d="M2266.500 1765H2291.500V1789H2266.500ZM2266.500 1773H2291.500M2266.500 1781H2291.500M2275 1765V1789M2283 1765V1789" stroke="#fff" stroke-width="2.400"/><rect x="2338" y="1765" width="26" height="24" stroke="#5e5e5e" stroke-width="2.200"/><path d="M2344 1771H2358V1783.500H2344ZM2344 1775.200H2358M2344 1779.400H2358" stroke="#5e5e5e" stroke-width="2"/><rect x="2408.800" y="1765" width="26" height="24" stroke="#5e5e5e" stroke-width="2.200"/><path d="M2416 1765V1777.500H2434.800M2425 1765V1777.500" stroke="#5e5e5e" stroke-width="2"/></svg>
</div></body></html>
